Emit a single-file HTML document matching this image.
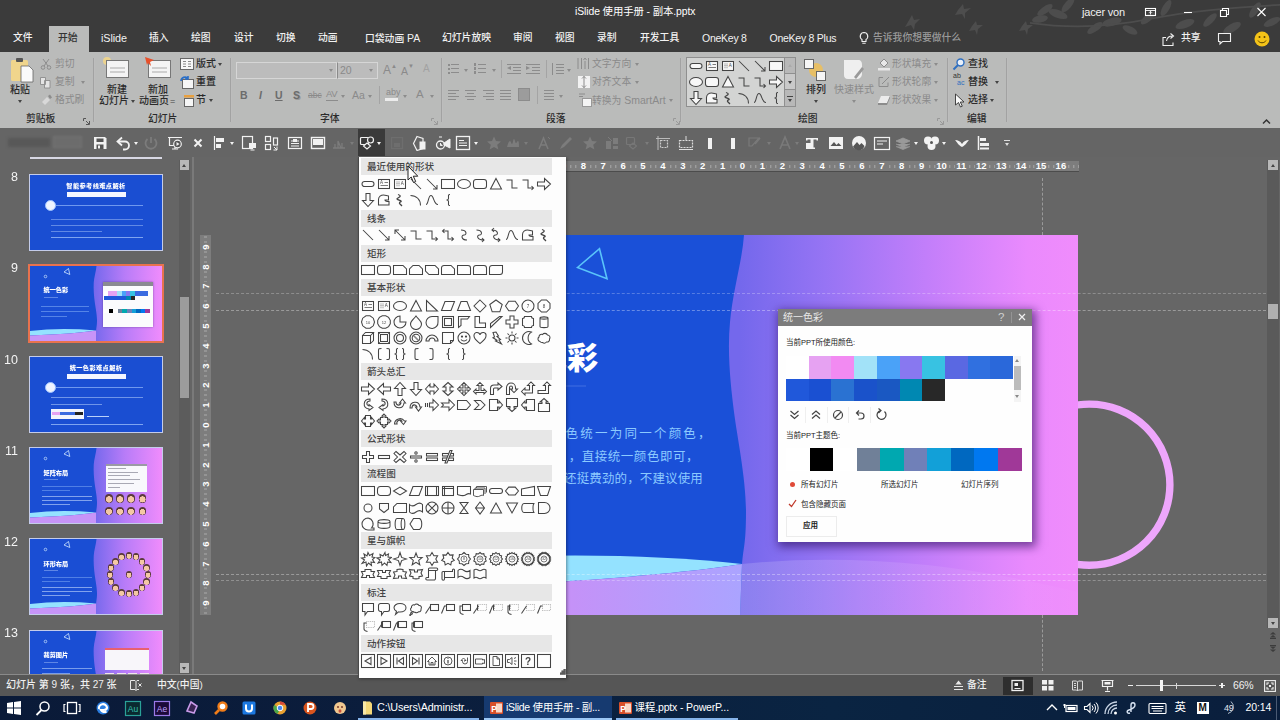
<!DOCTYPE html>
<html lang="zh-CN">
<head>
<meta charset="utf-8">
<title>iSlide 使用手册 - 副本.pptx</title>
<style>
*{box-sizing:border-box;margin:0;padding:0}
html,body{width:1280px;height:720px;overflow:hidden}
body{position:relative;background:#656565;font-family:"Liberation Sans","Noto Sans CJK SC",sans-serif;font-size:11px;color:#fff;filter:blur(0.45px)}
.abs{position:absolute}
#title{left:0;top:0;width:1280px;height:27px;background:#383838;overflow:visible}
#tabs{left:0;top:26px;width:1280px;height:26px;background:transparent}
#tabs span{position:absolute;top:5px;font-size:9.8px;line-height:14px;font-weight:500;color:#f2f2f2;white-space:nowrap}
#ribbon{left:0;top:52px;width:1280px;height:76px;background:#babbba}

#ribbon span{position:absolute;font-size:9.8px;line-height:14px;color:#2a2a2a;white-space:nowrap;font-weight:500}
#ribbon span.g{color:#8a8a8a;font-weight:400}
#ribbon i{position:absolute;width:0;height:0;border-left:2.5px solid transparent;border-right:2.5px solid transparent;border-top:3px solid #444}
#ribbon i.g{border-top-color:#8c8c8c}
#ribbon b.sep{position:absolute;top:6px;width:1px;height:64px;background:#a2a2a2;border-right:1px solid #bdbdbd;box-sizing:content-box}
#ribbon svg{position:absolute}
#qat{left:0;top:128px;width:1280px;height:29px;background:#656565}

#shapes{z-index:10;left:358px;top:157px;width:208px;height:521px;background:#fdfdfd;border-left:1px solid #4a4a4a;box-shadow:1px 1px 3px rgba(0,0,0,.4)}
#shapes .hd{position:absolute;left:2px;width:191px;height:17px;background:#e7e7e7;color:#444;font-size:9.600px;line-height:17px;padding-left:6px;font-weight:500}
#shapes svg{position:absolute;fill:none;stroke:#444;stroke-width:1.050}

#main{left:194px;top:157px;width:1086px;height:519px;overflow:hidden}
.hr{position:absolute;height:0;border-top:1px dashed rgba(255,255,255,.34)}
.vr{position:absolute;width:0;border-left:1px dashed rgba(255,255,255,.34)}
#hruler{left:404px;top:161px;width:675px;height:11px;background:#7d7d7d;border-bottom:1px solid #4c4c4c;overflow:hidden}
#hruler span{position:absolute;top:-1px;width:20px;text-align:center;font-size:9.500px;line-height:12px;color:#fff;font-weight:bold}
#vruler{left:200px;top:235px;width:11px;height:380px;background:#7d7d7d;overflow:hidden}
#vruler span{position:absolute;left:-4.500px;width:20px;height:12px;text-align:center;font-size:9.500px;line-height:12px;color:#fff;font-weight:bold;transform:rotate(-90deg)}
#dlg{left:778px;top:308.500px;width:254px;height:233.500px;background:#fefefe;box-shadow:2px 3px 9px 2px rgba(40,10,90,.6);color:#222}
#dlg span{position:absolute;white-space:nowrap;font-size:7.500px;line-height:10px;color:#222}

#left{left:0;top:157px;width:192px;height:519px;overflow:hidden;background:#656565}
#left .num{position:absolute;font-size:12.500px;line-height:14px;color:#f4f4f4;text-align:right;width:18px;left:0}
.th{position:absolute;left:30px;width:132px;height:75px;overflow:hidden;outline:1px solid #c4ccea;background:#1a4ed2}
.th span{position:absolute;white-space:nowrap;color:#fff;font-weight:900;font-size:6.200px;line-height:8px}
.th .l{position:absolute;height:1px;background:#7ea8f0}
.thb{background:linear-gradient(90deg,#7468ec 48%,#b87cf8 72%,#f08cfc 100%)}
#status{left:0;top:674px;width:1280px;height:22px;background:#565656;border-top:1.500px solid #8a8a8a}

#status span{position:absolute;top:2px;font-size:9.800px;line-height:14px;color:#f0f0f0;white-space:nowrap;font-weight:500}
#taskbar span{position:absolute;top:6px;font-size:10.500px;line-height:14px;color:#fff;white-space:nowrap}
#taskbar svg,#status svg{position:absolute}
#taskbar{left:0;top:696px;width:1280px;height:24px;background:#0a1f3c;overflow:hidden}
</style>
</head>
<body>
<div class="abs" style="left:0;top:0;width:1280px;height:52px;background:#3b3b3b"></div>
<div id="title" class="abs" style="background:transparent">
<svg class="abs" style="left:880px;top:0" width="400" height="52" viewBox="0 0 400 52">
<g fill="#4d4d4d">
<path d="M28 22l4-7 2 5 6-1-5 5-1 6-3-5-6 2z"/>
<path d="M78 10l5-6 1 5 7-1-6 5 0 6-3-5-7 1z"/>
<path d="M92 26l4-5 1 4 6 0-5 4-1 6-2-5-6 1z"/>
<path d="M142 26l4-5 1 4 6 0-5 4-1 6-2-5-6 1z"/>
<ellipse cx="165" cy="10" rx="9" ry="3.500" transform="rotate(-35 165 10)"/>
<ellipse cx="178" cy="14" rx="10" ry="4" transform="rotate(20 178 14)"/>
<ellipse cx="160" cy="19" rx="8" ry="3.500" transform="rotate(-10 160 19)"/>
<ellipse cx="188" cy="5" rx="9" ry="3.500" transform="rotate(-50 188 5)"/>
<ellipse cx="215" cy="28" rx="9" ry="3.500" transform="rotate(-35 215 28)"/>
<ellipse cx="232" cy="22" rx="10" ry="4" transform="rotate(-15 232 22)"/>
<ellipse cx="250" cy="30" rx="8" ry="3.500" transform="rotate(25 250 30)"/>
<ellipse cx="268" cy="18" rx="9" ry="3.500" transform="rotate(-40 268 18)"/>
<ellipse cx="286" cy="8" rx="9" ry="3.500" transform="rotate(-60 286 8)"/>
<ellipse cx="305" cy="24" rx="10" ry="4" transform="rotate(-20 305 24)"/>
<ellipse cx="330" cy="20" rx="9" ry="3.500" transform="rotate(-45 330 20)"/>
<ellipse cx="352" cy="28" rx="10" ry="4" transform="rotate(-30 352 28)"/>
<ellipse cx="375" cy="10" rx="9" ry="3.500" transform="rotate(-55 375 10)"/>
<ellipse cx="392" cy="22" rx="9" ry="3.500" transform="rotate(-25 392 22)"/>
<path d="M150 22c40 6 80 4 120-4s90-12 130-14v1.800c-40 2-90 6-130 14s-80 10-120 4z"/>
</g></svg>
<span class="abs" style="left:575px;top:5px;font-size:10.400px;line-height:14px;color:#fff;white-space:nowrap;letter-spacing:-.1px">iSlide 使用手册 - 副本.pptx</span>
<span class="abs" style="left:1082px;top:5px;font-size:11px;line-height:14px;color:#f0f0f0;white-space:nowrap;letter-spacing:-.2px">jacer von</span>
<svg class="abs" style="left:1140px;top:4px" width="136" height="18" viewBox="0 0 136 18" fill="none" stroke="#fff" stroke-width="1.1">
<rect x="5.5" y="4.5" width="10" height="7"/><path d="M5.5 6.5h10M10.5 10.5v-3M9 8.8l1.5-1.5 1.5 1.5" stroke-width=".9"/>
<path d="M44 8.5h8"/>
<path d="M80.500 6.500h6v6h-6zM82.500 6.500v-2h6v6h-2"/>
<path d="M117.500 4l8 8M125.500 4l-8 8"/>
</svg>
</div>
<div id="tabs" class="abs">
<div class="abs" style="left:49px;top:0;width:40px;height:26px;background:#babbba"></div>
<span style="left:13px">文件</span>
<span style="left:58px;color:#333">开始</span>
<span style="left:101px;font-size:10.800px;letter-spacing:-.1px">iSlide</span>
<span style="left:149px">插入</span>
<span style="left:191px">绘图</span>
<span style="left:234px">设计</span>
<span style="left:276px">切换</span>
<span style="left:318px">动画</span>
<span style="left:365px">口袋动画 <span style="position:static;font-size:10.500px">PA</span></span>
<span style="left:442px">幻灯片放映</span>
<span style="left:513px">审阅</span>
<span style="left:555px">视图</span>
<span style="left:597px">录制</span>
<span style="left:640px">开发工具</span>
<span style="left:702px;font-size:10.500px;letter-spacing:-.25px">OneKey 8</span>
<span style="left:769.500px;font-size:10.500px;letter-spacing:-.25px">OneKey 8 Plus</span>
<svg class="abs" style="left:857px;top:5px" width="14" height="16" viewBox="0 0 14 16" fill="none" stroke="#f0f0f0" stroke-width="1.1"><path d="M7 1.500a3.800 3.800 0 0 0-2 7v2h4v-2a3.800 3.800 0 0 0-2-7zM5.300 12.300h3.400"/></svg>
<span style="left:873px;color:#9a9a9a">告诉我你想要做什么</span>
<svg class="abs" style="left:1160px;top:4px" width="20" height="18" viewBox="0 0 20 18" fill="none" stroke="#f0f0f0" stroke-width="1.1"><path d="M6 7.500h-3v8h10v-3M6.500 11c.5-3 3-5 6-5M10.500 3.500l3 2.500-3 2.500"/></svg>
<span style="left:1181px">共享</span>
<svg class="abs" style="left:1216px;top:4px" width="18" height="18" viewBox="0 0 18 18" fill="none" stroke="#f0f0f0" stroke-width="1.1"><path d="M2.500 3.500h12v8h-8l-2.500 2.500v-2.500h-1.500z"/></svg>
<svg class="abs" style="left:1253px;top:4px" width="18" height="18" viewBox="0 0 18 18"><circle cx="9" cy="9" r="7.500" fill="#f4c318"/><circle cx="6.500" cy="7" r="1" fill="#5a4300"/><circle cx="11.500" cy="7" r="1" fill="#5a4300"/><path d="M5 10.500c1.500 3 6.500 3 8 0" fill="none" stroke="#5a4300" stroke-width="1"/></svg>
</div>
<div id="ribbon" class="abs">
<!-- clipboard -->
<svg style="left:10px;top:5px" width="25" height="27" viewBox="0 0 25 27"><rect x="1" y="3" width="17" height="21" rx="1.500" fill="#f0d58c"/><rect x="6" y="1" width="7" height="4" rx="1" fill="#555"/><path d="M11 9h8l4 4v12h-12z" fill="#fafafa" stroke="#666" stroke-width=".8"/></svg>
<span style="left:10px;top:31px;font-size:10px">粘贴</span><i style="left:18px;top:48px"></i>
<svg style="left:40px;top:6px" width="12" height="12" viewBox="0 0 12 12" fill="none" stroke="#8c8c8c" stroke-width="1"><path d="M3 1l5 7M9 1l-5 7"/><circle cx="3" cy="9.500" r="1.800"/><circle cx="9" cy="9.500" r="1.800"/></svg>
<span class="g" style="left:55px;top:5px">剪切</span>
<svg style="left:39px;top:24px" width="13" height="13" viewBox="0 0 13 13" fill="#e4e4e4" stroke="#8c8c8c" stroke-width=".9"><path d="M1.500 1.500h5v7h-5zM5.500 4.500h5.500v7.500h-5.500z"/></svg>
<span class="g" style="left:55px;top:23px">复制</span><i class="g" style="left:81px;top:29px"></i>
<svg style="left:41px;top:42px" width="12" height="12" viewBox="0 0 12 12"><path d="M1 8l5-5 3 3-5 5z" fill="#d8d8d8"/><path d="M7 2l2-1.500 2 3-2 1.500z" fill="#8c8c8c"/></svg>
<span class="g" style="left:55px;top:41px">格式刷</span>
<span style="left:26px;top:60px">剪贴板</span>
<svg style="left:83px;top:66px" width="7" height="7" viewBox="0 0 7 7" fill="none" stroke="#555" stroke-width="1"><path d="M.5 3v-2.500h2.500M6.500 3v3.500h-3.500M3 3l3 3"/></svg>
<b class="sep" style="left:93px"></b>
<!-- slides -->
<svg style="left:102px;top:4px" width="28" height="24" viewBox="0 0 28 24"><circle cx="5" cy="5" r="4" fill="#f2d68a" opacity=".9"/><rect x="4.500" y="4.500" width="22" height="17" fill="#f4f4f4" stroke="#777" stroke-width="1"/><path d="M8 12h15M8 16h15" stroke="#aaa" stroke-width="1"/></svg>
<span style="left:107px;top:31px;font-size:10px">新建</span>
<span style="left:99px;top:42px;font-size:10px">幻灯片</span><i style="left:131px;top:48px"></i>
<svg style="left:144px;top:4px" width="28" height="24" viewBox="0 0 28 24"><rect x="4.500" y="4.500" width="22" height="17" fill="#f4f4f4" stroke="#777" stroke-width="1"/><path d="M8 12h15M8 16h15" stroke="#aaa" stroke-width="1"/><path d="M1 1l9 3-4 2 1 4-3-3-1 2z" fill="#e8502a"/></svg>
<span style="left:148px;top:31px;font-size:10px">新加</span>
<span style="left:139px;top:42px;font-size:10px">动画页</span><span style="left:170px;top:42px;font-size:9px;color:#444">=</span>
<svg style="left:180px;top:6px" width="14" height="12" viewBox="0 0 14 12"><rect x=".5" y=".5" width="13" height="11" fill="#f6f6f6" stroke="#666"/><path d="M3 3.500h3M3 6h3M3 8.500h3M8 3.500h3M8 6h3M8 8.500h3" stroke="#888" stroke-width="1"/></svg>
<span style="left:196px;top:5px;font-size:10px">版式</span><i style="left:218px;top:11px"></i>
<svg style="left:180px;top:24px" width="14" height="13" viewBox="0 0 14 13"><rect x="2.500" y="3.500" width="11" height="9" fill="#f6f6f6" stroke="#666"/><path d="M1 5a4 4 0 0 1 7-2.500M8 0v3h-3" fill="none" stroke="#2a6fc9" stroke-width="1.600"/></svg>
<span style="left:196px;top:23px;font-size:10px">重置</span>
<svg style="left:184px;top:43px" width="10" height="12" viewBox="0 0 10 12"><rect x=".5" y="3.500" width="9" height="8" fill="#f6f6f6" stroke="#666"/><rect x="0" y="0" width="10" height="2.500" fill="#e8a040"/></svg>
<span style="left:196px;top:41px;font-size:10px">节</span><i style="left:209px;top:47px"></i>
<span style="left:148px;top:60px">幻灯片</span>
<b class="sep" style="left:230px"></b>
<!-- font -->
<div class="abs" style="left:236px;top:10px;width:101px;height:17px;border:1px solid #d6d6d6;background:#bcbcbc"></div>
<i class="g" style="left:329px;top:17px"></i>
<div class="abs" style="left:337px;top:10px;width:41px;height:17px;border:1px solid #d6d6d6;border-left-color:#8a8a8a;background:#bcbcbc"></div>
<span class="g" style="left:340px;top:11px;font-size:10.500px">20</span><i class="g" style="left:369px;top:17px"></i>
<span class="g" style="left:383px;top:11px;font-size:12px">A</span><span class="g" style="left:391px;top:7px;font-size:6px">▲</span>
<span class="g" style="left:401px;top:12px;font-size:10.500px">A</span><span class="g" style="left:408px;top:7px;font-size:6px">▼</span>
<span class="g" style="left:423px;top:10px;font-size:10px;color:#a2a2a2">A</span>
<span class="g" style="left:240px;top:36px;font-weight:bold;font-size:10.500px;color:#6c6c6c">B</span>
<span class="g" style="left:259px;top:36px;font-style:italic;font-weight:bold;font-size:10.500px;color:#6c6c6c">I</span>
<span class="g" style="left:275px;top:36px;text-decoration:underline;font-weight:bold;font-size:10.500px;color:#6c6c6c">U</span>
<span class="g" style="left:293px;top:36px;font-size:10.500px;font-weight:bold;color:#6c6c6c;text-shadow:1px 1px 0 #9a9a9a">S</span>
<span class="g" style="left:308px;top:36px;text-decoration:line-through;font-size:8.500px">abc</span>
<span class="g" style="left:326px;top:35px;font-size:9.500px;letter-spacing:-.5px">AV</span><div class="abs" style="left:326px;top:48px;width:12px;height:1px;background:#8c8c8c"></div><i class="g" style="left:341px;top:43px"></i>
<span class="g" style="left:352px;top:36px;font-size:10.500px">Aa</span><i class="g" style="left:368px;top:43px"></i>
<div class="abs" style="left:379px;top:34px;width:1px;height:18px;background:#a4a4a4"></div>
<span class="g" style="left:386px;top:33px;font-size:9px">aby</span><div class="abs" style="left:385px;top:46px;width:13px;height:3px;background:#ececec"></div><i class="g" style="left:403px;top:43px"></i>
<span class="g" style="left:416px;top:35px;font-size:11.500px">A</span><i class="g" style="left:430px;top:43px"></i>
<span style="left:320px;top:60px">字体</span>
<svg style="left:431px;top:66px" width="7" height="7" viewBox="0 0 7 7" fill="none" stroke="#999" stroke-width="1"><path d="M.5 3v-2.500h2.500M6.500 3v3.500h-3.500M3 3l3 3"/></svg>
<b class="sep" style="left:441px"></b>
<!-- paragraph -->
<div class="abs" style="left:451px;top:12px;width:8px;height:1px;background:#8c8c8c"></div><div class="abs" style="left:451px;top:16px;width:8px;height:1px;background:#8c8c8c"></div><div class="abs" style="left:451px;top:20px;width:8px;height:1px;background:#8c8c8c"></div><div class="abs" style="left:448px;top:12px;width:1.500px;height:1.500px;background:#8c8c8c"></div><div class="abs" style="left:448px;top:16px;width:1.500px;height:1.500px;background:#8c8c8c"></div><div class="abs" style="left:448px;top:20px;width:1.500px;height:1.500px;background:#8c8c8c"></div><i class="g" style="left:464px;top:17px"></i><div class="abs" style="left:478px;top:12px;width:8px;height:1px;background:#8c8c8c"></div><div class="abs" style="left:478px;top:16px;width:8px;height:1px;background:#8c8c8c"></div><div class="abs" style="left:478px;top:20px;width:8px;height:1px;background:#8c8c8c"></div><div class="abs" style="left:474px;top:11px;width:1.500px;height:2.500px;background:#8c8c8c"></div><div class="abs" style="left:474px;top:15px;width:1.500px;height:2.500px;background:#8c8c8c"></div><div class="abs" style="left:474px;top:19px;width:1.500px;height:2.500px;background:#8c8c8c"></div><i class="g" style="left:492px;top:17px"></i><div class="abs" style="left:501px;top:8px;width:1px;height:18px;background:#a4a4a4"></div><div class="abs" style="left:507px;top:12px;width:14px;height:1px;background:#8c8c8c"></div><div class="abs" style="left:513px;top:15px;width:8px;height:1px;background:#8c8c8c"></div><div class="abs" style="left:513px;top:18px;width:8px;height:1px;background:#8c8c8c"></div><div class="abs" style="left:507px;top:21px;width:14px;height:1px;background:#8c8c8c"></div><div class="abs" style="left:507px;top:14px;border-right:4px solid #8c8c8c;border-top:2.500px solid transparent;border-bottom:2.500px solid transparent"></div><div class="abs" style="left:526px;top:12px;width:14px;height:1px;background:#8c8c8c"></div><div class="abs" style="left:532px;top:15px;width:8px;height:1px;background:#8c8c8c"></div><div class="abs" style="left:532px;top:18px;width:8px;height:1px;background:#8c8c8c"></div><div class="abs" style="left:526px;top:21px;width:14px;height:1px;background:#8c8c8c"></div><div class="abs" style="left:526px;top:14px;border-left:4px solid #8c8c8c;border-top:2.500px solid transparent;border-bottom:2.500px solid transparent"></div><div class="abs" style="left:546px;top:8px;width:1px;height:18px;background:#a4a4a4"></div><div class="abs" style="left:556px;top:12px;width:8px;height:1px;background:#8c8c8c"></div><div class="abs" style="left:556px;top:15px;width:8px;height:1px;background:#8c8c8c"></div><div class="abs" style="left:556px;top:18px;width:8px;height:1px;background:#8c8c8c"></div><div class="abs" style="left:556px;top:21px;width:8px;height:1px;background:#8c8c8c"></div><div class="abs" style="left:552px;top:11px;width:1px;height:12px;background:#8c8c8c"></div><i class="g" style="left:567px;top:17px"></i><div class="abs" style="left:448px;top:38px;width:11px;height:1px;background:#8c8c8c"></div><div class="abs" style="left:448px;top:41px;width:8px;height:1px;background:#8c8c8c"></div><div class="abs" style="left:448px;top:44px;width:11px;height:1px;background:#8c8c8c"></div><div class="abs" style="left:448px;top:47px;width:8px;height:1px;background:#8c8c8c"></div><div class="abs" style="left:465px;top:38px;width:11px;height:1px;background:#8c8c8c"></div><div class="abs" style="left:467px;top:41px;width:7px;height:1px;background:#8c8c8c"></div><div class="abs" style="left:465px;top:44px;width:11px;height:1px;background:#8c8c8c"></div><div class="abs" style="left:467px;top:47px;width:7px;height:1px;background:#8c8c8c"></div><div class="abs" style="left:483px;top:38px;width:11px;height:1px;background:#8c8c8c"></div><div class="abs" style="left:486px;top:41px;width:8px;height:1px;background:#8c8c8c"></div><div class="abs" style="left:483px;top:44px;width:11px;height:1px;background:#8c8c8c"></div><div class="abs" style="left:486px;top:47px;width:8px;height:1px;background:#8c8c8c"></div><div class="abs" style="left:500px;top:38px;width:11px;height:1px;background:#8c8c8c"></div><div class="abs" style="left:500px;top:41px;width:11px;height:1px;background:#8c8c8c"></div><div class="abs" style="left:500px;top:44px;width:11px;height:1px;background:#8c8c8c"></div><div class="abs" style="left:500px;top:47px;width:11px;height:1px;background:#8c8c8c"></div><div class="abs" style="left:518px;top:36px;width:12px;height:13px;background:#9c9c9c;border:1px solid #8c8c8c"></div><div class="abs" style="left:537px;top:34px;width:1px;height:18px;background:#a4a4a4"></div><div class="abs" style="left:544px;top:38px;width:10px;height:1px;background:#8c8c8c"></div><div class="abs" style="left:544px;top:41px;width:10px;height:1px;background:#8c8c8c"></div><div class="abs" style="left:544px;top:44px;width:10px;height:1px;background:#8c8c8c"></div><div class="abs" style="left:544px;top:47px;width:10px;height:1px;background:#8c8c8c"></div><i class="g" style="left:559px;top:43px"></i>
<svg style="left:576px;top:5px" width="14" height="13" viewBox="0 0 14 13" fill="none" stroke="#8c8c8c" stroke-width="1"><path d="M2 1v11M5.500 1v11M9 4v8M12.500 1v11M7.500 3l1.500-2 1.500 2"/></svg>
<span class="g" style="left:592px;top:5px">文字方向</span><i class="g" style="left:635px;top:11px"></i>
<svg style="left:577px;top:23px" width="14" height="14" viewBox="0 0 14 14"><rect x="1" y="1" width="12" height="12" fill="#f2f2f2"/><path d="M7 1v12M5 3.500l2-2 2 2M5 10.500l2 2 2-2" fill="none" stroke="#8c8c8c" stroke-width="1"/></svg>
<span class="g" style="left:592px;top:23px">对齐文本</span><i class="g" style="left:635px;top:29px"></i>
<svg style="left:578px;top:41px" width="14" height="14" viewBox="0 0 14 14"><path d="M1 1h6M1 3.500h4" stroke="#8c8c8c" fill="none"/><rect x="4.500" y="5.500" width="9" height="8" fill="#f4f4f4" stroke="#999"/></svg>
<span class="g" style="left:592px;top:41px">转换为 <span style="position:static;font-size:10.500px;color:inherit">SmartArt</span></span><i class="g" style="left:669px;top:47px"></i>
<span style="left:546px;top:60px">段落</span>
<svg style="left:673px;top:66px" width="7" height="7" viewBox="0 0 7 7" fill="none" stroke="#999" stroke-width="1"><path d="M.5 3v-2.500h2.500M6.500 3v3.500h-3.500M3 3l3 3"/></svg>
<b class="sep" style="left:680px"></b>
<!-- drawing -->
<div class="abs" style="left:686px;top:5px;width:110px;height:50px;background:#d3d4d3;border:1px solid #8f8f8f"></div><div class="abs" style="left:784px;top:5px;width:12px;height:50px;border:1px solid #8f8f8f;background:#b8b8b8"></div><div class="abs" style="left:784px;top:21px;width:12px;height:17px;border:1px solid #8f8f8f;background:#c9c9c9"></div><i class="g" style="left:787.500px;top:12px;border-top:none;border-bottom:3px solid #aaa"></i><i style="left:787.500px;top:29px"></i><i style="left:787.500px;top:47px"></i><div class="abs" style="left:787px;top:44px;width:6px;height:1px;background:#444"></div><svg style="left:688px;top:6px;fill:#f8f8f8;stroke:#444;stroke-width:1.050" width="16" height="16" viewBox="0 0 16 16"><rect x="2" y="5.500" width="12" height="5" rx="2.500"/></svg><svg style="left:704px;top:6px;fill:#f8f8f8;stroke:#444;stroke-width:1.050" width="16" height="16" viewBox="0 0 16 16"><rect x="2.500" y="3.500" width="11" height="9"/><path d="M8.500 6.500h3.500M4.500 9.500h7.500" stroke-width=".7"/><text x="4" y="8" font-size="4.500" stroke="none" fill="#444" font-family="Liberation Sans,sans-serif">A</text></svg><svg style="left:720px;top:6px;fill:#f8f8f8;stroke:#444;stroke-width:1.050" width="16" height="16" viewBox="0 0 16 16"><rect x="2.500" y="3.500" width="11" height="9"/><path d="M5 5.500v5M7 5.500v5" stroke-width=".7" stroke-dasharray="1 .6"/><text x="8.800" y="9" font-size="4.500" stroke="none" fill="#444" font-family="Liberation Sans,sans-serif">A</text></svg><svg style="left:736px;top:6px;fill:none;stroke:#444;stroke-width:1.050" width="16" height="16" viewBox="0 0 16 16"><path d="M3 3l10 10"/></svg><svg style="left:752px;top:6px;fill:none;stroke:#444;stroke-width:1.050" width="16" height="16" viewBox="0 0 16 16"><path d="M3 3l10 10M13 9v4h-4"/></svg><svg style="left:768px;top:6px;fill:#f8f8f8;stroke:#444;stroke-width:1.050" width="16" height="16" viewBox="0 0 16 16"><rect x="1.500" y="3.500" width="13" height="9"/></svg><svg style="left:688px;top:22px;fill:#f8f8f8;stroke:#444;stroke-width:1.050" width="16" height="16" viewBox="0 0 16 16"><ellipse cx="8" cy="8" rx="6.500" ry="4.500"/></svg><svg style="left:704px;top:22px;fill:#f8f8f8;stroke:#444;stroke-width:1.050" width="16" height="16" viewBox="0 0 16 16"><rect x="1.500" y="3.500" width="13" height="9" rx="2.500"/></svg><svg style="left:720px;top:22px;fill:#f8f8f8;stroke:#444;stroke-width:1.050" width="16" height="16" viewBox="0 0 16 16"><path d="M8 2.500l5.500 10.500h-11z"/></svg><svg style="left:736px;top:22px;fill:none;stroke:#444;stroke-width:1.050" width="16" height="16" viewBox="0 0 16 16"><path d="M2.500 4h5.500v8h5.500"/></svg><svg style="left:752px;top:22px;fill:none;stroke:#444;stroke-width:1.050" width="16" height="16" viewBox="0 0 16 16"><path d="M2.500 4h5.500v8h5.500M11.500 10l2 2-2 2"/></svg><svg style="left:768px;top:22px;fill:#f8f8f8;stroke:#444;stroke-width:1.050" width="16" height="16" viewBox="0 0 16 16"><path d="M1.500 6h7v-3.500l6 5.500-6 5.500v-3.500h-7z"/></svg><svg style="left:688px;top:38px;fill:#f8f8f8;stroke:#444;stroke-width:1.050" width="16" height="16" viewBox="0 0 16 16"><path d="M6 1.500v7h-3.500l5.500 6 5.500-6h-3.500v-7z"/></svg><svg style="left:704px;top:38px;fill:#f8f8f8;stroke:#444;stroke-width:1.050" width="16" height="16" viewBox="0 0 16 16"><path d="M2.500 13v-5.500c0-3 2.500-4.500 5-4.500s3 1 5 1v4h-3.500c0 1.500 1.500 1.500 4 1.500v3.500z"/></svg><svg style="left:720px;top:38px;fill:none;stroke:#444;stroke-width:1.050" width="16" height="16" viewBox="0 0 16 16"><path d="M6 2.500c3 1 3 2 0 3.500s2 2 3 3-3 1-1 3 2 1 1 2" stroke-width="1.300"/></svg><svg style="left:736px;top:38px;fill:none;stroke:#444;stroke-width:1.050" width="16" height="16" viewBox="0 0 16 16"><path d="M2.500 3.500c6 0 10 4 10 10"/></svg><svg style="left:752px;top:38px;fill:none;stroke:#444;stroke-width:1.050" width="16" height="16" viewBox="0 0 16 16"><path d="M2 12.500C4.500 12.500 4 3.500 7 3.500S9.500 12.500 14 12.500"/></svg><svg style="left:768px;top:38px;fill:none;stroke:#444;stroke-width:1.050" width="16" height="16" viewBox="0 0 16 16"><path d="M10 2.500C8 2.500 8.500 3.500 8.500 5V6.500C8.500 7.500 8 8 6.500 8C8 8 8.500 8.500 8.500 9.500V11C8.500 12.500 8 13.500 10 13.500"/></svg>
<svg style="left:802px;top:5px" width="26" height="26" viewBox="0 0 26 26"><circle cx="14" cy="13" r="7" fill="#f5c04a" opacity=".75"/><rect x="2.500" y="2.500" width="9" height="9" fill="#f6f6f6" stroke="#666"/><rect x="14.500" y="14.500" width="9" height="9" fill="#f6f6f6" stroke="#666"/></svg>
<span style="left:806px;top:31px;font-size:10px">排列</span><i style="left:814px;top:48px"></i>
<svg style="left:840px;top:5px" width="27" height="27" viewBox="0 0 27 27"><path d="M4 3h14c3 0 4 2 4 5v8c0 4-2 6-6 6h-8c-3 0-4-2-4-4z" fill="#efefef"/><path d="M14 20l8-10 2 2-8 10z" fill="#9a9a9a"/></svg>
<span class="g" style="left:834px;top:31px;font-size:10px">快速样式</span><i class="g" style="left:852px;top:48px"></i>
<svg style="left:877px;top:5px" width="14" height="14" viewBox="0 0 14 14"><path d="M3 6l4-4 4 4-4 4z" fill="#e8e8e8" stroke="#8c8c8c"/><rect x="1" y="11" width="12" height="2.500" fill="#e8e8e8"/></svg>
<span class="g" style="left:892px;top:5px">形状填充</span><i class="g" style="left:934px;top:11px"></i>
<svg style="left:877px;top:23px" width="14" height="14" viewBox="0 0 14 14" fill="none" stroke="#8c8c8c"><path d="M6 2.500h-4v9h9v-4M5 9l7-7"/></svg>
<span class="g" style="left:892px;top:23px">形状轮廓</span><i class="g" style="left:934px;top:29px"></i>
<svg style="left:877px;top:41px" width="14" height="14" viewBox="0 0 14 14"><path d="M4 3h9l-3 7h-9z" fill="#ececec"/><path d="M1 10h9l3-7v2l-3 7h-9z" fill="#8c8c8c"/></svg>
<span class="g" style="left:892px;top:41px">形状效果</span><i class="g" style="left:934px;top:47px"></i>
<span style="left:798px;top:60px">绘图</span>
<svg style="left:937px;top:66px" width="7" height="7" viewBox="0 0 7 7" fill="none" stroke="#999" stroke-width="1"><path d="M.5 3v-2.500h2.500M6.500 3v3.500h-3.500M3 3l3 3"/></svg>
<b class="sep" style="left:947px"></b>
<!-- editing -->
<svg style="left:952px;top:5px" width="14" height="14" viewBox="0 0 14 14"><circle cx="8.500" cy="5.500" r="3.500" fill="#e8f0fa" stroke="#2f6fc0" stroke-width="1.400"/><path d="M6 8l-4.500 4.500" stroke="#2f6fc0" stroke-width="2"/></svg>
<span style="left:968px;top:5px;font-size:10px">查找</span>
<span style="left:953px;top:20px;font-size:7px;line-height:8px;color:#333">ab</span><span style="left:957px;top:27px;font-size:7px;line-height:8px;color:#2f6fc0">ac</span>
<span style="left:968px;top:23px;font-size:10px">替换</span><i style="left:995px;top:29px"></i>
<svg style="left:954px;top:41px" width="11" height="15" viewBox="0 0 11 15"><path d="M1.500 1v11l3-2.500 2 4.500 1.800-.8-2-4.200h3.700z" fill="#fafafa" stroke="#333" stroke-width=".9"/></svg>
<span style="left:968px;top:41px;font-size:10px">选择</span><i style="left:990px;top:47px"></i>
<span style="left:967px;top:60px">编辑</span>
<b class="sep" style="left:1006px"></b>
<svg style="left:1262px;top:66px" width="9" height="7" viewBox="0 0 9 7" fill="none" stroke="#333" stroke-width="1.500"><path d="M1 5.500l3.500-3.500 3.500 3.500"/></svg>

</div>
<div id="qat" class="abs">
<div class="abs" style="left:8px;top:10px;width:42px;height:9px;background:#585858;filter:blur(1.500px)"></div><div class="abs" style="left:53px;top:8px;width:29px;height:12px;background:#6c6c6c;border:1px solid #747474;filter:blur(.8px)"></div><div class="abs" style="left:358px;top:1px;width:27px;height:27px;background:#3a3a3a"></div><svg class="abs" style="left:92px;top:7px" width="16" height="16" viewBox="0 0 16 16"><path d="M2 2h11l1.500 1.500v10.500h-12.500z" fill="#f2f2f2"/><rect x="4.500" y="3.500" width="7" height="3.500" fill="#555"/><rect x="4.500" y="9.500" width="7" height="4.500" fill="#555"/><rect x="6" y="10.500" width="2" height="3" fill="#f2f2f2"/></svg>
<svg class="abs" style="left:116px;top:7px" width="16" height="16" viewBox="0 0 16 16"><path d="M2 6.500h7a4 4 0 0 1 0 8h-2" fill="none" stroke="#f2f2f2" stroke-width="1.800"/><path d="M6 2.500l-4.500 4 4.500 4" fill="none" stroke="#f2f2f2" stroke-width="1.800"/></svg>
<svg class="abs" style="left:143px;top:7px" width="16" height="16" viewBox="0 0 16 16"><path d="M11.500 4a5.500 5.500 0 1 1-7 0" fill="none" stroke="#7c7c7c" stroke-width="1.800"/><path d="M8 2v6" stroke="#7c7c7c" stroke-width="1.800"/></svg>
<svg class="abs" style="left:167px;top:7px" width="16" height="16" viewBox="0 0 16 16"><path d="M1 2.500h14M2.500 2.500v8h5M8 10.500v3M5 14h6" fill="none" stroke="#f2f2f2" stroke-width="1.200"/><circle cx="10.500" cy="9" r="3.800" fill="#555" stroke="#f2f2f2" stroke-width="1.200"/><path d="M9.500 7l3 2-3 2z" fill="#f2f2f2"/></svg>
<svg class="abs" style="left:190px;top:7px" width="16" height="16" viewBox="0 0 16 16"><path d="M4.500 4.500l7 7M11.500 4.500l-7 7" stroke="#f2f2f2" stroke-width="2"/></svg>
<svg class="abs" style="left:211px;top:7px" width="16" height="16" viewBox="0 0 16 16"><path d="M3.500 1v14" stroke="#f2f2f2" stroke-width="1.200"/><rect x="5" y="3" width="8" height="4" fill="#f2f2f2"/><rect x="5" y="9" width="5" height="4" fill="#f2f2f2"/></svg>
<svg class="abs" style="left:241px;top:7px" width="16" height="16" viewBox="0 0 16 16"><rect x="1.500" y="1.500" width="10" height="12" fill="none" stroke="#f2f2f2" stroke-width="1.200"/><rect x="8" y="8" width="7" height="5" fill="#f2f2f2"/><path d="M9.500 15h4" stroke="#f2f2f2"/></svg>
<svg class="abs" style="left:264px;top:7px" width="16" height="16" viewBox="0 0 16 16"><rect x="1.500" y="1.500" width="5" height="5" fill="none" stroke="#f2f2f2" stroke-width="1.200"/><rect x="1.500" y="9.500" width="5" height="5" fill="none" stroke="#f2f2f2" stroke-width="1.200"/><rect x="9.500" y="3" width="4" height="7" fill="none" stroke="#f2f2f2" stroke-width="1.200"/><path d="M10 12l3 3M13 11.500v3.500h-3.500" stroke="#f2f2f2" fill="none"/></svg>
<svg class="abs" style="left:287px;top:7px" width="16" height="16" viewBox="0 0 16 16"><rect x="1.500" y="2.500" width="13" height="11" fill="none" stroke="#f2f2f2" stroke-width="1.200"/><path d="M4 6h8M4 8.500h8M4 11h8" stroke="#f2f2f2" stroke-width="1"/><rect x="6" y="4" width="4" height="3" fill="#f2f2f2"/></svg>
<svg class="abs" style="left:310px;top:7px" width="16" height="16" viewBox="0 0 16 16"><rect x="1.500" y="2.500" width="13" height="11" fill="none" stroke="#f2f2f2" stroke-width="1.400"/><rect x="3" y="4" width="10" height="6" fill="#f2f2f2"/></svg>
<svg class="abs" style="left:331px;top:7px" width="16" height="16" viewBox="0 0 16 16"><path d="M2 13h12M4 13v-4M7 13v-7l3 7M11 13v-5" stroke="#7c7c7c" fill="none" stroke-width="1.300"/></svg>
<svg class="abs" style="left:359px;top:7px" width="16" height="16" viewBox="0 0 16 16"><rect x="1.500" y="2.500" width="8" height="7" rx="1" fill="none" stroke="#f2f2f2" stroke-width="1.200"/><circle cx="11.500" cy="5" r="3" fill="#3a3a3a" stroke="#f2f2f2" stroke-width="1.200"/><path d="M8 8l3.500 3-3.500 3-3.500-3z" fill="#3a3a3a" stroke="#f2f2f2" stroke-width="1.200"/></svg>
<svg class="abs" style="left:389px;top:7px" width="16" height="16" viewBox="0 0 16 16"><rect x="2.500" y="2.500" width="11" height="11" fill="none" stroke="#6e6e6e" stroke-width="1.200"/><rect x="5" y="8" width="6" height="4" fill="#6e6e6e"/></svg>
<svg class="abs" style="left:412px;top:7px" width="16" height="16" viewBox="0 0 16 16"><path d="M5 1.500l6 2v10l-6 2-3.500-7z" fill="none" stroke="#f2f2f2" stroke-width="1.200"/><rect x="7.500" y="6.500" width="6" height="8" fill="#f2f2f2"/></svg>
<svg class="abs" style="left:435px;top:7px" width="16" height="16" viewBox="0 0 16 16"><circle cx="5.500" cy="10" r="4" fill="none" stroke="#f2f2f2" stroke-width="1.300"/><path d="M5.500 8v2.500h2M4 2h3M9 8l6-4v9l-6-3z" fill="#f2f2f2" stroke="#f2f2f2" stroke-width="1"/></svg>
<svg class="abs" style="left:455px;top:7px" width="16" height="16" viewBox="0 0 16 16"><rect x="1.500" y="1.500" width="13" height="13" fill="none" stroke="#f2f2f2" stroke-width="1.300"/><path d="M4 5.500h5M4 8h8M4 10.500h8" stroke="#f2f2f2" stroke-width="1.200"/></svg>
<svg class="abs" style="left:486px;top:7px" width="16" height="16" viewBox="0 0 16 16"><path d="M8 1.500l2 4.500 5 .5-3.800 3.300 1.200 4.800-4.400-2.600-4.400 2.600 1.200-4.800-3.800-3.300 5-.5z" fill="#7c7c7c"/></svg>
<svg class="abs" style="left:505px;top:7px" width="16" height="16" viewBox="0 0 16 16"><path d="M1 13h14M2 12c1-4 2-6 3-6s1 3 2 3 1-5 2-5 1 4 2 4 1-2 2-2 1 3 1 6" fill="#7c7c7c"/></svg>
<svg class="abs" style="left:536px;top:7px" width="16" height="16" viewBox="0 0 16 16"><path d="M3 14l4.500-11 4.500 11M5 10h5" fill="none" stroke="#7c7c7c" stroke-width="1.500"/><path d="M12 2l2 2" stroke="#7c7c7c"/></svg>
<svg class="abs" style="left:558px;top:7px" width="16" height="16" viewBox="0 0 16 16"><path d="M2 14l2-4 8-8 2 2-8 8z" fill="#7c7c7c"/></svg>
<svg class="abs" style="left:582px;top:7px" width="16" height="16" viewBox="0 0 16 16"><path d="M8 1.500l2 4.500 5 .5-3.800 3.300 1.200 4.800-4.400-2.600-4.400 2.600 1.200-4.800-3.800-3.300 5-.5z" fill="#7c7c7c"/></svg>
<svg class="abs" style="left:604px;top:7px" width="16" height="16" viewBox="0 0 16 16"><rect x="2" y="6" width="5" height="8" fill="#7c7c7c"/><rect x="9" y="3" width="5" height="6" fill="#7c7c7c"/><rect x="9" y="11" width="5" height="3" fill="#7c7c7c"/><path d="M4 2l4 4" stroke="#7c7c7c"/></svg>
<svg class="abs" style="left:625px;top:7px" width="16" height="16" viewBox="0 0 16 16"><rect x="1.500" y="2.500" width="8" height="7" rx="1" fill="none" stroke="#777" stroke-width="1.200"/><path d="M8 8l3.500 3-3.500 3-3.500-3z" fill="none" stroke="#777" stroke-width="1.200"/></svg>
<svg class="abs" style="left:655px;top:7px" width="16" height="16" viewBox="0 0 16 16"><path d="M3 1v14M1 3.500h14" stroke="#bbb" stroke-width="1"/><rect x="5.500" y="5.500" width="7" height="7" fill="none" stroke="#ccc" stroke-width="1.200" stroke-dasharray="2 1"/></svg>
<svg class="abs" style="left:678px;top:7px" width="16" height="16" viewBox="0 0 16 16"><rect x="1.500" y="5.500" width="13" height="7" fill="none" stroke="#ddd" stroke-width="1.200" stroke-dasharray="2 1"/><path d="M8 1v4M1 14.500h14" stroke="#ddd"/></svg>
<svg class="abs" style="left:702px;top:7px" width="16" height="16" viewBox="0 0 16 16"><rect x="6" y="3" width="4" height="11" fill="#f2f2f2"/></svg>
<svg class="abs" style="left:725px;top:7px" width="16" height="16" viewBox="0 0 16 16"><rect x="6" y="3" width="4" height="11" fill="#f2f2f2"/></svg>
<svg class="abs" style="left:747px;top:7px" width="16" height="16" viewBox="0 0 16 16"><path d="M2 3h10l-7 8h-3z" fill="none" stroke="#7a7a7a" stroke-width="1.200"/><path d="M8 9l5-6" stroke="#7a7a7a" stroke-width="1.500"/></svg>
<svg class="abs" style="left:777px;top:7px" width="16" height="16" viewBox="0 0 16 16"><path d="M3 14l5-12 5 12M5 10h6" fill="none" stroke="#7a7a7a" stroke-width="1.600"/></svg>
<svg class="abs" style="left:804px;top:7px" width="16" height="16" viewBox="0 0 16 16"><path d="M2 3h12v2.500h-1.500v-1h-3v8h1.500v1.500h-6v-1.500h1.500v-8h-3v1h-1.500z" fill="#f2f2f2"/><rect x="2" y="8" width="5" height="6" fill="#f2f2f2"/></svg>
<svg class="abs" style="left:828px;top:7px" width="16" height="16" viewBox="0 0 16 16"><rect x="1" y="2" width="14" height="12" fill="#f2f2f2"/><path d="M2.500 11l3.500-4 2.500 3 2-2 3 3z" fill="#555"/></svg>
<svg class="abs" style="left:851px;top:7px" width="16" height="16" viewBox="0 0 16 16"><circle cx="8" cy="8" r="7" fill="#f2f2f2"/><path d="M2.500 11l3.500-4 2.500 3 2-2 3 3a6 6 0 0 1-11.500 0z" fill="#555"/></svg>
<svg class="abs" style="left:873px;top:7px" width="18" height="16" viewBox="0 0 18 16"><rect x="1.500" y="2.500" width="15" height="12" fill="none" stroke="#f2f2f2" stroke-width="1.200"/><path d="M4 6h10M4 9h6" stroke="#f2f2f2" stroke-width="1.200"/></svg>
<svg class="abs" style="left:895px;top:7px" width="16" height="16" viewBox="0 0 16 16"><path d="M8 3l7 3-7 3-7-3zM1 9l7 3 7-3M1 11.500l7 3 7-3" fill="#999" stroke="#999" stroke-width=".8"/></svg>
<svg class="abs" style="left:922.5px;top:7px" width="17" height="16" viewBox="0 0 17 16"><circle cx="5" cy="5.500" r="4" fill="#f2f2f2"/><circle cx="12" cy="5.500" r="4" fill="#f2f2f2"/><circle cx="8.500" cy="11" r="4" fill="#f2f2f2"/><circle cx="8.500" cy="7.500" r="1.500" fill="#555"/></svg>
<svg class="abs" style="left:954px;top:7px" width="16" height="16" viewBox="0 0 16 16"><path d="M1 5c3 0 5 1 7 4 2-3 4-4 7-4-2 2-3 5-7 7-4-2-5-5-7-7z" fill="#f2f2f2"/></svg>
<svg class="abs" style="left:976px;top:7px" width="16" height="16" viewBox="0 0 16 16"><path d="M2.500 1v14" stroke="#f2f2f2" stroke-width="1.500"/><rect x="4" y="3" width="6" height="3" fill="#f2f2f2"/><rect x="4" y="8" width="9" height="3" fill="#f2f2f2"/><rect x="4" y="12.500" width="9" height="2" fill="#f2f2f2"/></svg>
<div class="abs" style="left:133.5px;top:14px;border-left:2.500px solid transparent;border-right:2.500px solid transparent;border-top:3px solid #f2f2f2"></div><div class="abs" style="left:229.5px;top:14px;border-left:2.500px solid transparent;border-right:2.500px solid transparent;border-top:3px solid #f2f2f2"></div><div class="abs" style="left:349.5px;top:14px;border-left:2.500px solid transparent;border-right:2.500px solid transparent;border-top:3px solid #7c7c7c"></div><div class="abs" style="left:376.5px;top:14px;border-left:2.500px solid transparent;border-right:2.500px solid transparent;border-top:3px solid #f2f2f2"></div><div class="abs" style="left:473.5px;top:14px;border-left:2.500px solid transparent;border-right:2.500px solid transparent;border-top:3px solid #f2f2f2"></div><div class="abs" style="left:523.5px;top:14px;border-left:2.500px solid transparent;border-right:2.500px solid transparent;border-top:3px solid #7c7c7c"></div><div class="abs" style="left:644.5px;top:14px;border-left:2.500px solid transparent;border-right:2.500px solid transparent;border-top:3px solid #7c7c7c"></div><div class="abs" style="left:766.5px;top:14px;border-left:2.500px solid transparent;border-right:2.500px solid transparent;border-top:3px solid #7c7c7c"></div><div class="abs" style="left:794.5px;top:14px;border-left:2.500px solid transparent;border-right:2.500px solid transparent;border-top:3px solid #7c7c7c"></div><div class="abs" style="left:913.5px;top:14px;border-left:2.500px solid transparent;border-right:2.500px solid transparent;border-top:3px solid #f2f2f2"></div><div class="abs" style="left:941.5px;top:14px;border-left:2.500px solid transparent;border-right:2.500px solid transparent;border-top:3px solid #f2f2f2"></div><div class="abs" style="left:1004px;top:12px;width:6px;height:1px;background:#ddd"></div><div class="abs" style="left:1004.5px;top:15px;border-left:2.500px solid transparent;border-right:2.500px solid transparent;border-top:3px solid #ddd"></div>
</div>
<div id="left" class="abs">
<div class="abs" style="left:30px;top:0;width:132px;height:2px;background:#d8d8e4"></div><div class="num" style="top:13px">8</div><div class="num" style="top:104px">9</div><div class="num" style="top:195.5px">10</div><div class="num" style="top:286.5px">11</div><div class="num" style="top:377.5px">12</div><div class="num" style="top:468.5px">13</div><div class="th" style="top:17.5px"><span style="left:0;width:132px;text-align:center;top:7.500px;letter-spacing:.4px">智能参考线难点解析</span><div class="abs" style="left:37px;top:17.500px;width:59px;height:4.500px;background:#f4f6ff"></div><div class="abs" style="left:14.500px;top:25px;width:11px;height:11px;border-radius:6px;background:#eef4ff;border:1.500px solid #9cc0ff"></div><div class="l" style="left:26px;top:30.500px;width:87px;background:#6f98ee"></div><div class="l" style="left:21px;top:44px;width:92px;background:#a8c4f8;opacity:.5"></div><div class="l" style="left:21px;top:50px;width:92px;background:#a8c4f8;opacity:.5"></div><div class="l" style="left:21px;top:56px;width:50.6px;background:#a8c4f8;opacity:.5"></div><div class="l" style="left:21px;top:62.500px;width:92px;background:#7ea4f0"></div></div><div class="th thb" style="top:108.5px;outline:2.500px solid #e8724e;"><svg class="abs" style="left:0;top:0" width="132" height="75" viewBox="0 0 132 75"><path d="M0 0H66.500C66 6 64 11 63.700 17S64 30 64.600 35 67 48 67 54 66.300 61 66.200 64.500L66 75H0z" fill="#1a4ed4"/><path d="M0 65Q30 61.500 66.200 64.500Q45 67.800 0 69.500z" fill="#94e2ff"/><path d="M0 69.500Q45 67.800 66.200 64.500L66 75H0z" fill="#c794f8"/><path d="M34 6l4.500-3.500 1.300 6z" fill="none" stroke="#cfe6ff" stroke-width=".8"/><circle cx="15.500" cy="10.500" r="1.300" fill="none" stroke="#cfe6ff" stroke-width=".7"/></svg><span style="left:13.500px;top:20.500px">统一色彩</span><div class="l" style="left:14px;top:31px;width:14px;background:#5e86e6"></div><div class="abs" style="left:72.500px;top:16.500px;width:50px;height:45px;background:#fbfbfd;box-shadow:0 0 2px rgba(40,20,90,.5)"></div><div class="abs" style="left:72.500px;top:16.500px;width:50px;height:3.500px;background:#8a8a92"></div><div class="abs" style="left:74px;top:25.500px;width:44px;height:4.500px;background:linear-gradient(90deg,#fff 0 10%,#e6a2f2 10% 30%,#a2e2f8 30% 40%,#4aa2f8 40% 50%,#8878f0 50% 60%,#38c2e2 60% 70%,#3a6ae0 70%)"></div><div class="abs" style="left:74px;top:30px;width:31px;height:4.500px;background:linear-gradient(90deg,#2058da 0 70%,#0088b2 70% 86%,#282828 86%)"></div><div class="abs" style="left:74px;top:43px;width:45.500px;height:4.500px;background:linear-gradient(90deg,#fff 0 10%,#000 10% 20%,#fff 20% 30%,#708098 30% 40%,#00a8b0 40% 50%,#7080b8 50% 60%,#12a0d8 60% 70%,#0068c0 70% 80%,#0078f0 80% 90%,#a03898 90%)"></div><div class="l" style="left:10.5px;top:40px;width:48px;background:#86b0f6;opacity:.55"></div><div class="l" style="left:10.5px;top:45.2px;width:48px;background:#86b0f6;opacity:.55"></div><div class="l" style="left:10.5px;top:50.4px;width:26.4px;background:#86b0f6;opacity:.55"></div></div><div class="th" style="top:199.5px"><span style="left:0;width:132px;text-align:center;top:7.500px;letter-spacing:.4px">统一色彩难点解析</span><div class="abs" style="left:37px;top:17.500px;width:59px;height:4.500px;background:#f4f6ff"></div><div class="abs" style="left:14.500px;top:25px;width:11px;height:11px;border-radius:6px;background:#eef4ff;border:1.500px solid #9cc0ff"></div><div class="l" style="left:26px;top:30.500px;width:87px;background:#6f98ee"></div><div class="l" style="left:21px;top:40.5px;width:92px;background:#a8c4f8;opacity:.6"></div><div class="l" style="left:21px;top:47px;width:50.6px;background:#a8c4f8;opacity:.6"></div><div class="abs" style="left:21px;top:52.500px;width:33px;height:10px;background:#f2f4fc"></div><div class="abs" style="left:22px;top:55px;width:31px;height:3.500px;background:linear-gradient(90deg,#e6a2f2 0 25%,#3a6ae0 25% 75%,#222 75%)"></div><div class="l" style="left:57px;top:59px;width:22px;background:#b8d0fa"></div><div class="l" style="left:21px;top:67.500px;width:92px;background:#7ea4f0"></div></div><div class="th thb" style="top:291px;"><svg class="abs" style="left:0;top:0" width="132" height="75" viewBox="0 0 132 75"><path d="M0 0H66.500C66 6 64 11 63.700 17S64 30 64.600 35 67 48 67 54 66.300 61 66.200 64.500L66 75H0z" fill="#1a4ed4"/><path d="M0 65Q30 61.500 66.200 64.500Q45 67.800 0 69.500z" fill="#94e2ff"/><path d="M0 69.500Q45 67.800 66.200 64.500L66 75H0z" fill="#c794f8"/><path d="M34 6l4.500-3.500 1.300 6z" fill="none" stroke="#cfe6ff" stroke-width=".8"/><circle cx="15.500" cy="10.500" r="1.300" fill="none" stroke="#cfe6ff" stroke-width=".7"/></svg><span style="left:13.500px;top:20.500px">矩阵布局</span><div class="l" style="left:14px;top:31px;width:14px;background:#5e86e6"></div><div class="abs" style="left:75.500px;top:15.500px;width:41.500px;height:28px;background:#f8f8fc;border-top:2px solid #9a9aa4"></div><div class="l" style="left:78px;top:20px;width:18px;background:#a8a8b4"></div><div class="l" style="left:78px;top:23.7px;width:30px;background:#a8a8b4"></div><div class="l" style="left:78px;top:27.4px;width:22px;background:#a8a8b4"></div><div class="l" style="left:78px;top:31.1px;width:32px;background:#a8a8b4"></div><div class="l" style="left:78px;top:34.8px;width:26px;background:#a8a8b4"></div><div class="l" style="left:78px;top:38.5px;width:12px;background:#a8a8b4"></div><div class="abs" style="left:75px;top:46px;width:7.500px;height:8.500px;border-radius:4px;background:radial-gradient(circle at 50% 60%,#f4c8a4 0 45%,#5a3a3a 50%)"></div><div class="abs" style="left:86.2px;top:46px;width:7.500px;height:8.500px;border-radius:4px;background:radial-gradient(circle at 50% 60%,#f4c8a4 0 45%,#5a3a3a 50%)"></div><div class="abs" style="left:97.4px;top:46px;width:7.500px;height:8.500px;border-radius:4px;background:radial-gradient(circle at 50% 60%,#f4c8a4 0 45%,#5a3a3a 50%)"></div><div class="abs" style="left:108.6px;top:46px;width:7.500px;height:8.500px;border-radius:4px;background:radial-gradient(circle at 50% 60%,#f4c8a4 0 45%,#5a3a3a 50%)"></div><div class="abs" style="left:75px;top:58.5px;width:7.500px;height:8.500px;border-radius:4px;background:radial-gradient(circle at 50% 60%,#f4c8a4 0 45%,#5a3a3a 50%)"></div><div class="abs" style="left:86.2px;top:58.5px;width:7.500px;height:8.500px;border-radius:4px;background:radial-gradient(circle at 50% 60%,#f4c8a4 0 45%,#5a3a3a 50%)"></div><div class="abs" style="left:97.4px;top:58.5px;width:7.500px;height:8.500px;border-radius:4px;background:radial-gradient(circle at 50% 60%,#f4c8a4 0 45%,#5a3a3a 50%)"></div><div class="abs" style="left:108.6px;top:58.5px;width:7.500px;height:8.500px;border-radius:4px;background:radial-gradient(circle at 50% 60%,#f4c8a4 0 45%,#5a3a3a 50%)"></div><div class="l" style="left:12px;top:37.5px;width:50px;background:#86b0f6;opacity:.5"></div><div class="l" style="left:12px;top:42px;width:27.5px;background:#86b0f6;opacity:.5"></div><div class="l" style="left:12px;top:47.5px;width:50px;background:#b8d0fa;opacity:.65"></div><div class="l" style="left:12px;top:51.7px;width:50px;background:#b8d0fa;opacity:.65"></div><div class="l" style="left:12px;top:55.9px;width:27.5px;background:#b8d0fa;opacity:.65"></div></div><div class="th thb" style="top:382px;"><svg class="abs" style="left:0;top:0" width="132" height="75" viewBox="0 0 132 75"><path d="M0 0H66.500C66 6 64 11 63.700 17S64 30 64.600 35 67 48 67 54 66.300 61 66.200 64.500L66 75H0z" fill="#1a4ed4"/><path d="M0 65Q30 61.500 66.200 64.500Q45 67.800 0 69.500z" fill="#94e2ff"/><path d="M0 69.500Q45 67.800 66.200 64.500L66 75H0z" fill="#c794f8"/><path d="M34 6l4.500-3.500 1.300 6z" fill="none" stroke="#cfe6ff" stroke-width=".8"/><circle cx="15.500" cy="10.500" r="1.300" fill="none" stroke="#cfe6ff" stroke-width=".7"/></svg><span style="left:13.500px;top:20.500px">环形布局</span><div class="l" style="left:14px;top:31px;width:14px;background:#5e86e6"></div><div class="abs" style="left:114.5px;top:32.0px;width:6.500px;height:7px;border-radius:3.500px;background:radial-gradient(circle at 50% 60%,#f4c8a4 0 45%,#5a3a3a 50%)"></div><div class="abs" style="left:113.1px;top:39.3px;width:6.500px;height:7px;border-radius:3.500px;background:radial-gradient(circle at 50% 60%,#f4c8a4 0 45%,#5a3a3a 50%)"></div><div class="abs" style="left:108.9px;top:45.4px;width:6.500px;height:7px;border-radius:3.500px;background:radial-gradient(circle at 50% 60%,#f4c8a4 0 45%,#5a3a3a 50%)"></div><div class="abs" style="left:102.8px;top:49.6px;width:6.500px;height:7px;border-radius:3.500px;background:radial-gradient(circle at 50% 60%,#f4c8a4 0 45%,#5a3a3a 50%)"></div><div class="abs" style="left:95.5px;top:51.0px;width:6.500px;height:7px;border-radius:3.500px;background:radial-gradient(circle at 50% 60%,#f4c8a4 0 45%,#5a3a3a 50%)"></div><div class="abs" style="left:88.2px;top:49.6px;width:6.500px;height:7px;border-radius:3.500px;background:radial-gradient(circle at 50% 60%,#f4c8a4 0 45%,#5a3a3a 50%)"></div><div class="abs" style="left:82.1px;top:45.4px;width:6.500px;height:7px;border-radius:3.500px;background:radial-gradient(circle at 50% 60%,#f4c8a4 0 45%,#5a3a3a 50%)"></div><div class="abs" style="left:77.9px;top:39.3px;width:6.500px;height:7px;border-radius:3.500px;background:radial-gradient(circle at 50% 60%,#f4c8a4 0 45%,#5a3a3a 50%)"></div><div class="abs" style="left:76.5px;top:32.0px;width:6.500px;height:7px;border-radius:3.500px;background:radial-gradient(circle at 50% 60%,#f4c8a4 0 45%,#5a3a3a 50%)"></div><div class="abs" style="left:77.9px;top:24.7px;width:6.500px;height:7px;border-radius:3.500px;background:radial-gradient(circle at 50% 60%,#f4c8a4 0 45%,#5a3a3a 50%)"></div><div class="abs" style="left:82.1px;top:18.6px;width:6.500px;height:7px;border-radius:3.500px;background:radial-gradient(circle at 50% 60%,#f4c8a4 0 45%,#5a3a3a 50%)"></div><div class="abs" style="left:88.2px;top:14.4px;width:6.500px;height:7px;border-radius:3.500px;background:radial-gradient(circle at 50% 60%,#f4c8a4 0 45%,#5a3a3a 50%)"></div><div class="abs" style="left:95.5px;top:13.0px;width:6.500px;height:7px;border-radius:3.500px;background:radial-gradient(circle at 50% 60%,#f4c8a4 0 45%,#5a3a3a 50%)"></div><div class="abs" style="left:102.8px;top:14.4px;width:6.500px;height:7px;border-radius:3.500px;background:radial-gradient(circle at 50% 60%,#f4c8a4 0 45%,#5a3a3a 50%)"></div><div class="abs" style="left:108.9px;top:18.6px;width:6.500px;height:7px;border-radius:3.500px;background:radial-gradient(circle at 50% 60%,#f4c8a4 0 45%,#5a3a3a 50%)"></div><div class="abs" style="left:113.1px;top:24.7px;width:6.500px;height:7px;border-radius:3.500px;background:radial-gradient(circle at 50% 60%,#f4c8a4 0 45%,#5a3a3a 50%)"></div><div class="abs" style="left:96px;top:32px;width:5.500px;height:6.500px;border-radius:3px;background:radial-gradient(circle at 50% 60%,#f4c8a4 0 45%,#5a3a3a 50%)"></div><div class="l" style="left:12px;top:37.5px;width:50px;background:#86b0f6;opacity:.5"></div><div class="l" style="left:12px;top:42px;width:27.5px;background:#86b0f6;opacity:.5"></div><div class="l" style="left:12px;top:47.5px;width:50px;background:#b8d0fa;opacity:.65"></div><div class="l" style="left:12px;top:51.7px;width:50px;background:#b8d0fa;opacity:.65"></div><div class="l" style="left:12px;top:55.9px;width:27.5px;background:#b8d0fa;opacity:.65"></div></div><div class="th thb" style="top:473.5px;"><svg class="abs" style="left:0;top:0" width="132" height="75" viewBox="0 0 132 75"><path d="M0 0H66.500C66 6 64 11 63.700 17S64 30 64.600 35 67 48 67 54 66.300 61 66.200 64.500L66 75H0z" fill="#1a4ed4"/><path d="M0 65Q30 61.500 66.200 64.500Q45 67.800 0 69.500z" fill="#94e2ff"/><path d="M0 69.500Q45 67.800 66.200 64.500L66 75H0z" fill="#c794f8"/><path d="M34 6l4.500-3.500 1.300 6z" fill="none" stroke="#cfe6ff" stroke-width=".8"/><circle cx="15.500" cy="10.500" r="1.300" fill="none" stroke="#cfe6ff" stroke-width=".7"/></svg><span style="left:13.500px;top:20.500px">裁剪图片</span><div class="l" style="left:14px;top:31px;width:14px;background:#5e86e6"></div><div class="abs" style="left:75px;top:17px;width:44px;height:22px;background:#f8f6fa;border-top:2px solid #e86070"></div><div class="abs" style="left:75px;top:42.500px;width:9px;height:6px;background:#f0e4ec"></div><div class="abs" style="left:86.5px;top:42.500px;width:9px;height:6px;background:#f0e4ec"></div><div class="abs" style="left:98px;top:42.500px;width:9px;height:6px;background:#f0e4ec"></div><div class="abs" style="left:109.5px;top:42.500px;width:9px;height:6px;background:#f0e4ec"></div><div class="l" style="left:12px;top:37.5px;width:50px;background:#b8d0fa;opacity:.6"></div><div class="l" style="left:12px;top:42px;width:27.5px;background:#b8d0fa;opacity:.6"></div></div><div class="abs" style="left:179px;top:3px;width:11px;height:514px;background:#5c5c5c"></div><div class="abs" style="left:180px;top:3px;width:9px;height:10px;background:#b8b8b8"></div><div class="abs" style="left:182px;top:6.500px;border-left:2.500px solid transparent;border-right:2.500px solid transparent;border-bottom:3px solid #444"></div><div class="abs" style="left:180px;top:140px;width:9px;height:101px;background:#9c9c9c"></div><div class="abs" style="left:180px;top:506px;width:9px;height:10px;background:#b8b8b8"></div><div class="abs" style="left:182px;top:510px;border-left:2.500px solid transparent;border-right:2.500px solid transparent;border-top:3px solid #444"></div>
</div>
<div id="mainbg" class="abs" style="left:194px;top:157px;width:1086px;height:519px;background:#666"></div>
<div class="abs" style="left:192px;top:157px;width:2px;height:519px;background:#7a7a7a"></div>
<div id="hruler" class="abs"><div class="abs" style="left:0;top:4px;width:675px;height:3px;background:repeating-linear-gradient(90deg,rgba(255,255,255,.35) 0 1px,transparent 1px 4.980px);background-position:2.300px 0"></div><span style="left:10.1px;background:#7d7d7d;width:12px;margin-left:4px">16</span><span style="left:30.0px;background:#7d7d7d;width:12px;margin-left:4px">15</span><span style="left:49.9px;background:#7d7d7d;width:12px;margin-left:4px">14</span><span style="left:69.8px;background:#7d7d7d;width:12px;margin-left:4px">13</span><span style="left:89.7px;background:#7d7d7d;width:12px;margin-left:4px">12</span><span style="left:109.6px;background:#7d7d7d;width:12px;margin-left:4px">11</span><span style="left:129.5px;background:#7d7d7d;width:12px;margin-left:4px">10</span><span style="left:149.4px;background:#7d7d7d;width:8px;margin-left:6px">9</span><span style="left:169.3px;background:#7d7d7d;width:8px;margin-left:6px">8</span><span style="left:189.2px;background:#7d7d7d;width:8px;margin-left:6px">7</span><span style="left:209.1px;background:#7d7d7d;width:8px;margin-left:6px">6</span><span style="left:229.0px;background:#7d7d7d;width:8px;margin-left:6px">5</span><span style="left:248.9px;background:#7d7d7d;width:8px;margin-left:6px">4</span><span style="left:268.8px;background:#7d7d7d;width:8px;margin-left:6px">3</span><span style="left:288.7px;background:#7d7d7d;width:8px;margin-left:6px">2</span><span style="left:308.6px;background:#7d7d7d;width:8px;margin-left:6px">1</span><span style="left:328.5px;background:#7d7d7d;width:8px;margin-left:6px">0</span><span style="left:348.4px;background:#7d7d7d;width:8px;margin-left:6px">1</span><span style="left:368.3px;background:#7d7d7d;width:8px;margin-left:6px">2</span><span style="left:388.2px;background:#7d7d7d;width:8px;margin-left:6px">3</span><span style="left:408.1px;background:#7d7d7d;width:8px;margin-left:6px">4</span><span style="left:428.0px;background:#7d7d7d;width:8px;margin-left:6px">5</span><span style="left:447.9px;background:#7d7d7d;width:8px;margin-left:6px">6</span><span style="left:467.8px;background:#7d7d7d;width:8px;margin-left:6px">7</span><span style="left:487.7px;background:#7d7d7d;width:8px;margin-left:6px">8</span><span style="left:507.6px;background:#7d7d7d;width:8px;margin-left:6px">9</span><span style="left:527.5px;background:#7d7d7d;width:12px;margin-left:4px">10</span><span style="left:547.4px;background:#7d7d7d;width:12px;margin-left:4px">11</span><span style="left:567.3px;background:#7d7d7d;width:12px;margin-left:4px">12</span><span style="left:587.2px;background:#7d7d7d;width:12px;margin-left:4px">13</span><span style="left:607.1px;background:#7d7d7d;width:12px;margin-left:4px">14</span><span style="left:627.0px;background:#7d7d7d;width:12px;margin-left:4px">15</span><span style="left:646.9px;background:#7d7d7d;width:12px;margin-left:4px">16</span></div>
<div id="vruler" class="abs"><div class="abs" style="left:4px;top:0;width:3px;height:380px;background:repeating-linear-gradient(180deg,rgba(255,255,255,.35) 0 1px,transparent 1px 4.950px);background-position:0 1.500px"></div><span style="top:5.8px"><b style="background:#7d7d7d;font-weight:bold;padding:0 1px">9</b></span><span style="top:25.6px"><b style="background:#7d7d7d;font-weight:bold;padding:0 1px">8</b></span><span style="top:45.4px"><b style="background:#7d7d7d;font-weight:bold;padding:0 1px">7</b></span><span style="top:65.2px"><b style="background:#7d7d7d;font-weight:bold;padding:0 1px">6</b></span><span style="top:85.0px"><b style="background:#7d7d7d;font-weight:bold;padding:0 1px">5</b></span><span style="top:104.8px"><b style="background:#7d7d7d;font-weight:bold;padding:0 1px">4</b></span><span style="top:124.6px"><b style="background:#7d7d7d;font-weight:bold;padding:0 1px">3</b></span><span style="top:144.4px"><b style="background:#7d7d7d;font-weight:bold;padding:0 1px">2</b></span><span style="top:164.2px"><b style="background:#7d7d7d;font-weight:bold;padding:0 1px">1</b></span><span style="top:184.0px"><b style="background:#7d7d7d;font-weight:bold;padding:0 1px">0</b></span><span style="top:203.8px"><b style="background:#7d7d7d;font-weight:bold;padding:0 1px">1</b></span><span style="top:223.6px"><b style="background:#7d7d7d;font-weight:bold;padding:0 1px">2</b></span><span style="top:243.4px"><b style="background:#7d7d7d;font-weight:bold;padding:0 1px">3</b></span><span style="top:263.2px"><b style="background:#7d7d7d;font-weight:bold;padding:0 1px">4</b></span><span style="top:283.0px"><b style="background:#7d7d7d;font-weight:bold;padding:0 1px">5</b></span><span style="top:302.8px"><b style="background:#7d7d7d;font-weight:bold;padding:0 1px">6</b></span><span style="top:322.6px"><b style="background:#7d7d7d;font-weight:bold;padding:0 1px">7</b></span><span style="top:342.4px"><b style="background:#7d7d7d;font-weight:bold;padding:0 1px">8</b></span><span style="top:362.2px"><b style="background:#7d7d7d;font-weight:bold;padding:0 1px">9</b></span></div>
<svg class="abs" style="left:404px;top:235px" width="673.700" height="380" viewBox="404 235 673.700 380">
<defs>
<linearGradient id="gp" x1="740" x2="1078" y1="0" y2="0" gradientUnits="userSpaceOnUse"><stop offset="0" stop-color="#7468ec"/><stop offset=".25" stop-color="#9674f4"/><stop offset=".55" stop-color="#c27efa"/><stop offset=".85" stop-color="#ea8afd"/><stop offset="1" stop-color="#f08cfc"/></linearGradient>
<linearGradient id="gl" x1="404" x2="745" y1="0" y2="0" gradientUnits="userSpaceOnUse"><stop offset="0" stop-color="#f090fa"/><stop offset=".5" stop-color="#c492f8"/><stop offset="1" stop-color="#aaa4ff"/></linearGradient>
<linearGradient id="gw" x1="740" x2="1078" y1="0" y2="0" gradientUnits="userSpaceOnUse"><stop offset="0" stop-color="#fff" stop-opacity=".16"/><stop offset="1" stop-color="#fff" stop-opacity=".02"/></linearGradient>
</defs>
<rect x="404" y="235" width="675" height="380" fill="url(#gp)"/>
<path d="M404 235H744C742 262 733 290 730 322S731 388 734 412 746 478 746 512 743 548 742 566L740 615H404z" fill="#1a50d8"/>
<path d="M404 562Q600 548 742 564Q640 580 404 590z" fill="#94e2ff"/>
<path d="M404 590Q640 580 742 564L740 615H404z" fill="url(#gl)"/>
<path d="M742 564Q900 548 1078 592V615H740z" fill="url(#gw)"/>
<path d="M577.500 267.500L599.500 248.700 607 278.700z" fill="none" stroke="#5ac4fa" stroke-width="1.600"/>
<text x="474" y="369" font-size="31" font-weight="900" fill="#fff" font-family="Noto Sans CJK SC,sans-serif">统一色彩</text>
<rect x="476" y="385.500" width="110" height="1" fill="#5c86e8" opacity=".6"/>
<g font-size="12.500" fill="#8ccaff" font-family="Noto Sans CJK SC,sans-serif">
<text x="565.500" y="438.500" letter-spacing="2.250">色统一为同一个颜色，</text>
<text x="568.700" y="461.500" letter-spacing=".55">，直接统一颜色即可，</text>
<text x="564" y="483.500" letter-spacing=".15">还挺费劲的，不建议使用</text>
</g>
</svg>
<svg class="abs" style="left:1077.700px;top:395px" width="110" height="180" viewBox="1077.700 395 110 180"><circle cx="1089" cy="484.700" r="80.600" fill="none" stroke="#eea6fc" stroke-width="7.400"/></svg>
<div class="hr" style="left:216px;top:293px;width:1050px;opacity:.75"></div>
<div class="hr" style="left:216px;top:310px;width:1050px"></div>
<div class="hr" style="left:216px;top:574px;width:1050px"></div>
<div class="hr" style="left:216px;top:580px;width:1050px;opacity:.8"></div>
<div class="vr" style="left:1042px;top:178px;height:57px"></div>
<div class="vr" style="left:1042px;top:615px;height:56px"></div>
<div id="dlg" class="abs"><div class="abs" style="left:0;top:0;width:254px;height:17.500px;background:#7c7c7c"></div><span style="left:5px;top:2px;font-size:10px;line-height:13px;color:#e8e8e8">统一色彩</span><span style="left:220px;top:1.500px;font-size:11.500px;line-height:14px;color:#d0d0d0">?</span><div class="abs" style="left:233px;top:3px;width:1px;height:11px;background:#949494"></div><svg class="abs" style="left:240px;top:4.500px" width="8" height="8" viewBox="0 0 8 8"><path d="M1 1l6 6M7 1l-6 6" stroke="#f0f0f0" stroke-width="1.200"/></svg><span style="left:8px;top:29.500px">当前PPT所使用颜色:</span><div class="abs" style="left:8.0px;top:47.300px;width:23px;height:23px;background:#ffffff"></div><div class="abs" style="left:30.7px;top:47.300px;width:23px;height:23px;background:#e6a2f2"></div><div class="abs" style="left:53.4px;top:47.300px;width:23px;height:23px;background:#f28af2"></div><div class="abs" style="left:76.1px;top:47.300px;width:23px;height:23px;background:#a2e2f8"></div><div class="abs" style="left:98.8px;top:47.300px;width:23px;height:23px;background:#4aa2f8"></div><div class="abs" style="left:121.5px;top:47.300px;width:23px;height:23px;background:#8878f0"></div><div class="abs" style="left:144.2px;top:47.300px;width:23px;height:23px;background:#38c2e2"></div><div class="abs" style="left:166.9px;top:47.300px;width:23px;height:23px;background:#5a68e2"></div><div class="abs" style="left:189.6px;top:47.300px;width:23px;height:23px;background:#3070e0"></div><div class="abs" style="left:212.3px;top:47.300px;width:23px;height:23px;background:#2a68da"></div><div class="abs" style="left:8.0px;top:70.200px;width:23px;height:22.500px;background:#2058da"></div><div class="abs" style="left:30.7px;top:70.200px;width:23px;height:22.500px;background:#1a50d2"></div><div class="abs" style="left:53.4px;top:70.200px;width:23px;height:22.500px;background:#2a72d2"></div><div class="abs" style="left:76.1px;top:70.200px;width:23px;height:22.500px;background:#1a52ca"></div><div class="abs" style="left:98.8px;top:70.200px;width:23px;height:22.500px;background:#1a58c2"></div><div class="abs" style="left:121.5px;top:70.200px;width:23px;height:22.500px;background:#0088b2"></div><div class="abs" style="left:144.2px;top:70.200px;width:23px;height:22.500px;background:#282828"></div><div class="abs" style="left:236px;top:47px;width:7px;height:46px;background:#f4f4f4"></div><div class="abs" style="left:236px;top:57px;width:7px;height:24.500px;background:#bcbcbc"></div><div class="abs" style="left:237px;top:50px;border-left:2.500px solid transparent;border-right:2.500px solid transparent;border-bottom:3px solid #888"></div><div class="abs" style="left:237px;top:86.500px;border-left:2.500px solid transparent;border-right:2.500px solid transparent;border-top:3px solid #888"></div><svg class="abs" style="left:8px;top:97.500px" width="110" height="18" viewBox="0 0 110 18" fill="none" stroke="#444" stroke-width="1.200"><path d="M4.500 5l4 3.500 4-3.500M4.500 9l4 3.500 4-3.500"/><path d="M26 8.500l4-3.500 4 3.500M26 12.500l4-3.500 4 3.500"/><circle cx="52" cy="9" r="4.500"/><path d="M49 12l6-6"/><path d="M70.500 7h4.500a3 3 0 0 1 0 6h-2.500M73 4.500l-2.500 2.500 2.500 2.500"/><path d="M98.500 5.500a4.500 4.500 0 1 1-4-1M92.500 2.500l2.500 2-2.500 2.500"/><path d="M19.500 1v16M41.500 1v16M62.500 1v16M84.500 1v16" stroke="#efefef" stroke-width="1"/></svg><span style="left:8px;top:122.500px">当前PPT主题色:</span><div class="abs" style="left:8.0px;top:139.500px;width:24px;height:22.500px;background:#ffffff"></div><div class="abs" style="left:31.5px;top:139.500px;width:24px;height:22.500px;background:#000000"></div><div class="abs" style="left:55.0px;top:139.500px;width:24px;height:22.500px;background:#ffffff"></div><div class="abs" style="left:78.5px;top:139.500px;width:24px;height:22.500px;background:#708098"></div><div class="abs" style="left:102.0px;top:139.500px;width:24px;height:22.500px;background:#00a8b0"></div><div class="abs" style="left:125.5px;top:139.500px;width:24px;height:22.500px;background:#7080b8"></div><div class="abs" style="left:149.0px;top:139.500px;width:24px;height:22.500px;background:#12a0d8"></div><div class="abs" style="left:172.5px;top:139.500px;width:24px;height:22.500px;background:#0068c0"></div><div class="abs" style="left:196.0px;top:139.500px;width:24px;height:22.500px;background:#0078f0"></div><div class="abs" style="left:219.5px;top:139.500px;width:24px;height:22.500px;background:#a03898"></div><div class="abs" style="left:11.500px;top:173px;width:5px;height:5px;border-radius:3px;background:#e04a38"></div><span style="left:23px;top:171px">所有幻灯片</span><span style="left:103px;top:171px">所选幻灯片</span><span style="left:183px;top:171px">幻灯片序列</span><svg class="abs" style="left:10px;top:190px" width="9" height="9" viewBox="0 0 9 9"><path d="M1 5l2.500 2.500 4.500-6.500" fill="none" stroke="#c0392b" stroke-width="1.300"/></svg><span style="left:23px;top:191px">包含隐藏页面</span><div class="abs" style="left:8px;top:207px;width:51px;height:21px;border:1px solid #ececec"></div><span style="left:25px;top:212.500px;font-weight:bold">应用</span></div>
<div class="abs" style="left:1267px;top:160px;width:12px;height:468px;background:#5a5a5a"></div>
<div class="abs" style="left:1268px;top:160px;width:10px;height:10px;background:#b8b8b8"></div><div class="abs" style="left:1270.500px;top:163.500px;border-left:2.500px solid transparent;border-right:2.500px solid transparent;border-bottom:3px solid #444"></div>
<div class="abs" style="left:1268px;top:304px;width:10px;height:15px;background:#b0b0b0"></div>
<div class="abs" style="left:1268px;top:618px;width:10px;height:10px;background:#b8b8b8"></div><div class="abs" style="left:1270.500px;top:622px;border-left:2.500px solid transparent;border-right:2.500px solid transparent;border-top:3px solid #444"></div>
<svg class="abs" style="left:1269px;top:632px" width="8" height="22" viewBox="0 0 8 22" fill="#3c3c3c"><path d="M4 0l3 2.500h-6zM4 3l3 2.500h-6zM1 14.500h6l-3 2.500zM1 17.500h6l-3 2.500z"/><path d="M1 6.500h6M1 13.500h6" stroke="#3c3c3c"/></svg>

<div id="shapes" class="abs">
<div class="hd" style="top:0.5px">最近使用的形状</div>
<svg style="left:1.3px;top:19px" width="16" height="16" viewBox="0 0 16 16"><rect x="2" y="5.500" width="12" height="5" rx="2.500"/></svg>
<svg style="left:17.3px;top:19px" width="16" height="16" viewBox="0 0 16 16"><rect x="2.500" y="3.500" width="11" height="9"/><path d="M8.500 6.500h3.500M4.500 9.500h7.500" stroke-width=".7"/><text x="4" y="8" font-size="4.500" stroke="none" fill="#444" font-family="Liberation Sans,sans-serif">A</text></svg>
<svg style="left:33.2px;top:19px" width="16" height="16" viewBox="0 0 16 16"><rect x="2.500" y="3.500" width="11" height="9"/><path d="M5 5.500v5M7 5.500v5" stroke-width=".7" stroke-dasharray="1 .6"/><text x="8.800" y="9" font-size="4.500" stroke="none" fill="#444" font-family="Liberation Sans,sans-serif">A</text></svg>
<svg style="left:49.2px;top:19px" width="16" height="16" viewBox="0 0 16 16"><path d="M3 3l10 10"/></svg>
<svg style="left:65.1px;top:19px" width="16" height="16" viewBox="0 0 16 16"><path d="M3 3l10 10M13 9v4h-4"/></svg>
<svg style="left:81.1px;top:19px" width="16" height="16" viewBox="0 0 16 16"><rect x="1.500" y="3.500" width="13" height="9"/></svg>
<svg style="left:97.1px;top:19px" width="16" height="16" viewBox="0 0 16 16"><ellipse cx="8" cy="8" rx="6.500" ry="4.500"/></svg>
<svg style="left:113.0px;top:19px" width="16" height="16" viewBox="0 0 16 16"><rect x="1.500" y="3.500" width="13" height="9" rx="2.500"/></svg>
<svg style="left:129.0px;top:19px" width="16" height="16" viewBox="0 0 16 16"><path d="M8 2.500l5.500 10.500h-11z"/></svg>
<svg style="left:144.9px;top:19px" width="16" height="16" viewBox="0 0 16 16"><path d="M2.500 4h5.500v8h5.500"/></svg>
<svg style="left:160.9px;top:19px" width="16" height="16" viewBox="0 0 16 16"><path d="M2.500 4h5.500v8h5.500M11.500 10l2 2-2 2"/></svg>
<svg style="left:176.9px;top:19px" width="16" height="16" viewBox="0 0 16 16"><path d="M1.500 6h7v-3.500l6 5.500-6 5.500v-3.500h-7z"/></svg>
<svg style="left:1.3px;top:34.5px" width="16" height="16" viewBox="0 0 16 16"><path d="M6 1.500v7h-3.500l5.500 6 5.500-6h-3.500v-7z"/></svg>
<svg style="left:17.3px;top:34.5px" width="16" height="16" viewBox="0 0 16 16"><path d="M2.500 13v-5.500c0-3 2.500-4.500 5-4.500s3 1 5 1v4h-3.500c0 1.500 1.500 1.500 4 1.500v3.500z"/></svg>
<svg style="left:33.2px;top:34.5px" width="16" height="16" viewBox="0 0 16 16"><path d="M6 2.500c3 1 3 2 0 3.500s2 2 3 3-3 1-1 3 2 1 1 2" stroke-width="1.300"/></svg>
<svg style="left:49.2px;top:34.5px" width="16" height="16" viewBox="0 0 16 16"><path d="M2.500 3.500c6 0 10 4 10 10"/></svg>
<svg style="left:65.1px;top:34.5px" width="16" height="16" viewBox="0 0 16 16"><path d="M2 12.500C4.500 12.500 4 3.500 7 3.500S9.500 12.500 14 12.500"/></svg>
<svg style="left:81.1px;top:34.5px" width="16" height="16" viewBox="0 0 16 16"><path d="M10 2.500C8 2.500 8.500 3.500 8.500 5V6.500C8.500 7.500 8 8 6.500 8C8 8 8.500 8.500 8.500 9.500V11C8.500 12.500 8 13.500 10 13.500"/></svg>
<div class="hd" style="top:52.5px">线条</div>
<svg style="left:1.3px;top:69.5px" width="16" height="16" viewBox="0 0 16 16"><path d="M3 3l10 10"/></svg>
<svg style="left:17.3px;top:69.5px" width="16" height="16" viewBox="0 0 16 16"><path d="M3 3l10 10M13 9v4h-4"/></svg>
<svg style="left:33.2px;top:69.5px" width="16" height="16" viewBox="0 0 16 16"><path d="M3 3l10 10M13 9v4h-4M3 7v-4h4"/></svg>
<svg style="left:49.2px;top:69.5px" width="16" height="16" viewBox="0 0 16 16"><path d="M2.500 4h5.500v8h5.500"/></svg>
<svg style="left:65.1px;top:69.5px" width="16" height="16" viewBox="0 0 16 16"><path d="M2.500 4h5.500v8h5.500M11.500 10l2 2-2 2"/></svg>
<svg style="left:81.1px;top:69.5px" width="16" height="16" viewBox="0 0 16 16"><path d="M2.500 4h5.500v8h5.500M11.500 10l2 2-2 2M4.500 2l-2 2 2 2"/></svg>
<svg style="left:97.1px;top:69.5px" width="16" height="16" viewBox="0 0 16 16"><path d="M5 3C11 3 11 8 8 8S5 13 11 13"/></svg>
<svg style="left:113.0px;top:69.5px" width="16" height="16" viewBox="0 0 16 16"><path d="M4.500 3C10.500 3 10.500 8 7.500 8S4.500 13 12 13M10 11l2 2-2 2"/></svg>
<svg style="left:129.0px;top:69.5px" width="16" height="16" viewBox="0 0 16 16"><path d="M4 3C10.500 3 10.500 8 7.500 8S4.500 13 12 13M10 11l2 2-2 2M6 1l-2 2 2 2"/></svg>
<svg style="left:144.9px;top:69.5px" width="16" height="16" viewBox="0 0 16 16"><path d="M2 12.500C4.500 12.500 4 3.500 7 3.500S9.500 12.500 14 12.500"/></svg>
<svg style="left:160.9px;top:69.5px" width="16" height="16" viewBox="0 0 16 16"><path d="M2.500 13v-5.500c0-3 2.500-4.500 5-4.500s3 1 5 1v4h-3.500c0 1.500 1.500 1.500 4 1.500v3.500z"/></svg>
<svg style="left:176.9px;top:69.5px" width="16" height="16" viewBox="0 0 16 16"><path d="M6 2.500c3 1 3 2 0 3.500s2 2 3 3-3 1-1 3 2 1 1 2" stroke-width="1.300"/></svg>
<div class="hd" style="top:87.5px">矩形</div>
<svg style="left:1.3px;top:105px" width="16" height="16" viewBox="0 0 16 16"><rect x="1.500" y="3.500" width="13" height="9"/></svg>
<svg style="left:17.3px;top:105px" width="16" height="16" viewBox="0 0 16 16"><rect x="1.500" y="3.500" width="13" height="9" rx="2.500"/></svg>
<svg style="left:33.2px;top:105px" width="16" height="16" viewBox="0 0 16 16"><path d="M1.500 3.500h9.500l3.500 3.500v5.500h-13z"/></svg>
<svg style="left:49.2px;top:105px" width="16" height="16" viewBox="0 0 16 16"><path d="M5 3.500h6l3.500 3.500v5.500h-13v-5.500z"/></svg>
<svg style="left:65.1px;top:105px" width="16" height="16" viewBox="0 0 16 16"><path d="M1.500 3.500h9.500l3.500 3.500v5.500h-9.500l-3.500-3.500z"/></svg>
<svg style="left:81.1px;top:105px" width="16" height="16" viewBox="0 0 16 16"><path d="M4 3.500h7l3.500 3.500v5.500h-13v-6.500a2.500 2.500 0 0 1 2.500-2.500z"/></svg>
<svg style="left:97.1px;top:105px" width="16" height="16" viewBox="0 0 16 16"><path d="M1.500 3.500h10.500a2.500 2.500 0 0 1 2.500 2.500v6.500h-13z"/></svg>
<svg style="left:113.0px;top:105px" width="16" height="16" viewBox="0 0 16 16"><path d="M4 3.500h8a2.500 2.500 0 0 1 2.500 2.500v6.500h-13v-6.500a2.500 2.500 0 0 1 2.500-2.500z"/></svg>
<svg style="left:129.0px;top:105px" width="16" height="16" viewBox="0 0 16 16"><path d="M4 3.500h10.500v6.500a2.500 2.500 0 0 1-2.500 2.500h-10.500v-6.500a2.500 2.500 0 0 1 2.500-2.500z"/></svg>
<div class="hd" style="top:122px">基本形状</div>
<svg style="left:1.3px;top:140.5px" width="16" height="16" viewBox="0 0 16 16"><rect x="2.500" y="3.500" width="11" height="9"/><path d="M8.500 6.500h3.500M4.500 9.500h7.500" stroke-width=".7"/><text x="4" y="8" font-size="4.500" stroke="none" fill="#444" font-family="Liberation Sans,sans-serif">A</text></svg>
<svg style="left:17.3px;top:140.5px" width="16" height="16" viewBox="0 0 16 16"><rect x="2.500" y="3.500" width="11" height="9"/><path d="M5 5.500v5M7 5.500v5" stroke-width=".7" stroke-dasharray="1 .6"/><text x="8.800" y="9" font-size="4.500" stroke="none" fill="#444" font-family="Liberation Sans,sans-serif">A</text></svg>
<svg style="left:33.2px;top:140.5px" width="16" height="16" viewBox="0 0 16 16"><ellipse cx="8" cy="8" rx="6.500" ry="4.500"/></svg>
<svg style="left:49.2px;top:140.5px" width="16" height="16" viewBox="0 0 16 16"><path d="M8 2.500l5.500 10.500h-11z"/></svg>
<svg style="left:65.1px;top:140.5px" width="16" height="16" viewBox="0 0 16 16"><path d="M2.500 2.500v10.500h11z"/></svg>
<svg style="left:81.1px;top:140.5px" width="16" height="16" viewBox="0 0 16 16"><path d="M5 3.500h9.500l-3.500 9h-9.500z"/></svg>
<svg style="left:97.1px;top:140.5px" width="16" height="16" viewBox="0 0 16 16"><path d="M5 3.500h6l3.500 9h-13z"/></svg>
<svg style="left:113.0px;top:140.5px" width="16" height="16" viewBox="0 0 16 16"><path d="M8 2l6 6-6 6-6-6z"/></svg>
<svg style="left:129.0px;top:140.5px" width="16" height="16" viewBox="0 0 16 16"><path d="M8.0 2.0L14.2 6.5L11.8 13.8L4.2 13.8L1.8 6.5z"/></svg>
<svg style="left:144.9px;top:140.5px" width="16" height="16" viewBox="0 0 16 16"><path d="M14.5 8.0L11.2 12.8L4.8 12.8L1.5 8.0L4.7 3.2L11.2 3.2z"/></svg>
<svg style="left:160.9px;top:140.5px" width="16" height="16" viewBox="0 0 16 16"><circle cx="8" cy="8" r="6"/><text x="8" y="9.600" font-size="4.5" text-anchor="middle" stroke="none" fill="#444" font-family="Liberation Sans,sans-serif">7</text></svg>
<svg style="left:176.9px;top:140.5px" width="16" height="16" viewBox="0 0 16 16"><path d="M14.0 10.5L10.5 14.0L5.5 14.0L2.0 10.5L2.0 5.5L5.5 2.0L10.5 2.0L14.0 5.5z"/><text x="8" y="9.600" font-size="4.5" text-anchor="middle" stroke="none" fill="#444" font-family="Liberation Sans,sans-serif">8</text></svg>
<svg style="left:1.3px;top:157px" width="16" height="16" viewBox="0 0 16 16"><path d="M14.5 8.0L13.3 11.8L10.0 14.2L6.0 14.2L2.7 11.8L1.5 8.0L2.7 4.2L6.0 1.8L10.0 1.8L13.3 4.2z"/><text x="8" y="9.600" font-size="4" text-anchor="middle" stroke="none" fill="#444" font-family="Liberation Sans,sans-serif">10</text></svg>
<svg style="left:17.3px;top:157px" width="16" height="16" viewBox="0 0 16 16"><path d="M14.3 9.7L12.6 12.6L9.7 14.3L6.3 14.3L3.4 12.6L1.7 9.7L1.7 6.3L3.4 3.4L6.3 1.7L9.7 1.7L12.6 3.4L14.3 6.3z"/><text x="8" y="9.600" font-size="4" text-anchor="middle" stroke="none" fill="#444" font-family="Liberation Sans,sans-serif">12</text></svg>
<svg style="left:33.2px;top:157px" width="16" height="16" viewBox="0 0 16 16"><path d="M8 8h6a6 6 0 1 1-6-6z"/></svg>
<svg style="left:49.2px;top:157px" width="16" height="16" viewBox="0 0 16 16"><path d="M8 2c2 3 5.500 5 5.500 8a5.500 5.500 0 0 1-11 0c0-3 3.500-5 5.500-8z"/></svg>
<svg style="left:65.1px;top:157px" width="16" height="16" viewBox="0 0 16 16"><path d="M14 2.500v5.500a6 6 0 1 1-6-5.500z"/></svg>
<svg style="left:81.1px;top:157px" width="16" height="16" viewBox="0 0 16 16"><rect x="2.500" y="2.500" width="11" height="11"/><rect x="4.500" y="4.500" width="7" height="7"/></svg>
<svg style="left:97.1px;top:157px" width="16" height="16" viewBox="0 0 16 16"><path d="M2.500 2.500h11l-2 2.500h-6.500v6.500l-2.500 2z"/></svg>
<svg style="left:113.0px;top:157px" width="16" height="16" viewBox="0 0 16 16"><path d="M3 2.500h4.500v6.500h6v4.500h-10.500z"/></svg>
<svg style="left:129.0px;top:157px" width="16" height="16" viewBox="0 0 16 16"><path d="M2.500 13.500v-4l9-7h2.500z"/></svg>
<svg style="left:144.9px;top:157px" width="16" height="16" viewBox="0 0 16 16"><path d="M6 2h4v4h4v4h-4v4h-4v-4h-4v-4h4z"/></svg>
<svg style="left:160.9px;top:157px" width="16" height="16" viewBox="0 0 16 16"><path d="M4.500 2.500h7a2 2 0 0 0 2 2v7a2 2 0 0 0-2 2h-7a2 2 0 0 0-2-2v-7a2 2 0 0 0 2-2z"/></svg>
<svg style="left:176.9px;top:157px" width="16" height="16" viewBox="0 0 16 16"><path d="M4 4v8.500c0 1.500 8 1.500 8 0v-8.500M4 4c0 1.500 8 1.500 8 0s-8-1.500-8 0z"/></svg>
<svg style="left:1.3px;top:172.5px" width="16" height="16" viewBox="0 0 16 16"><path d="M2.500 5.500h8v8h-8zM2.500 5.500l3-3h8l-3 3M13.500 2.500v8l-3 3"/></svg>
<svg style="left:17.3px;top:172.5px" width="16" height="16" viewBox="0 0 16 16"><rect x="2.500" y="2.500" width="11" height="11"/><rect x="4.500" y="4.500" width="7" height="7"/><path d="M2.500 2.500l2 2M13.500 2.500l-2 2M2.500 13.500l2-2M13.500 13.500l-2-2" stroke-width=".7"/></svg>
<svg style="left:33.2px;top:172.5px" width="16" height="16" viewBox="0 0 16 16"><circle cx="8" cy="8" r="6"/><circle cx="8" cy="8" r="3.500"/></svg>
<svg style="left:49.2px;top:172.5px" width="16" height="16" viewBox="0 0 16 16"><circle cx="8" cy="8" r="6"/><circle cx="8" cy="8" r="3.800"/><path d="M5 5.500l5.500 5.500M5.500 5l5.500 5.500" stroke-width=".8"/></svg>
<svg style="left:65.1px;top:172.5px" width="16" height="16" viewBox="0 0 16 16"><path d="M2 11a6 6 0 0 1 12 0h-3a3 3 0 0 0-6 0z"/></svg>
<svg style="left:81.1px;top:172.5px" width="16" height="16" viewBox="0 0 16 16"><path d="M2.500 2.500h11v8l-3 3h-8zM13.500 10.500h-3v3"/></svg>
<svg style="left:97.1px;top:172.5px" width="16" height="16" viewBox="0 0 16 16"><circle cx="8" cy="8" r="6"/><path d="M5 9.500c1.500 2 4.500 2 6 0"/><circle cx="6" cy="6.500" r=".6" fill="#444"/><circle cx="10" cy="6.500" r=".6" fill="#444"/></svg>
<svg style="left:113.0px;top:172.5px" width="16" height="16" viewBox="0 0 16 16"><path d="M8 13.500c-3-2.500-6-4.500-6-7.500a3 3 0 0 1 6-1a3 3 0 0 1 6 1c0 3-3 5-6 7.500z"/></svg>
<svg style="left:129.0px;top:172.5px" width="16" height="16" viewBox="0 0 16 16"><path d="M5 2.500l3-.5 2.500 4-1.500.5 3.500 3-1.500.5 2.500 4-6-3 1.500-.8-4-2.500 1.500-.7z"/></svg>
<svg style="left:144.9px;top:172.5px" width="16" height="16" viewBox="0 0 16 16"><circle cx="8" cy="8" r="3"/><path d="M8 1.500v2M8 12.500v2M1.500 8h2M12.500 8h2M3.500 3.500l1.500 1.500M11 11l1.500 1.500M12.500 3.500l-1.500 1.500M5 11l-1.500 1.500"/></svg>
<svg style="left:160.9px;top:172.5px" width="16" height="16" viewBox="0 0 16 16"><path d="M11.500 2a6.500 6.500 0 1 0 0 12a7 7 0 0 1 0-12z"/></svg>
<svg style="left:176.9px;top:172.5px" width="16" height="16" viewBox="0 0 16 16"><path d="M4 11.500a2.500 2.500 0 0 1-1-4.500a2.500 2.500 0 0 1 3.500-2.500a3 3 0 0 1 5 .5a2.500 2.500 0 0 1 2 4a2.500 2.500 0 0 1-3 3a3 3 0 0 1-4 .5a3 3 0 0 1-2.500-1z"/></svg>
<svg style="left:1.3px;top:188.5px" width="16" height="16" viewBox="0 0 16 16"><path d="M2.500 3.500c6 0 10 4 10 10"/></svg>
<svg style="left:17.3px;top:188.5px" width="16" height="16" viewBox="0 0 16 16"><path d="M5.500 2.500c-2.500 0-3 0-3 2v7c0 2 .5 2 3 2M10.500 2.500c2.500 0 3 0 3 2v7c0 2-.5 2-3 2"/></svg>
<svg style="left:33.2px;top:188.5px" width="16" height="16" viewBox="0 0 16 16"><path d="M6 2.5C4 2.5 4.5 3.5 4.5 5V6.5C4.5 7.5 4 8 2.5 8C4 8 4.5 8.5 4.5 9.5V11C4.5 12.5 4 13.5 6 13.5M10 2.5C12 2.5 11.5 3.5 11.5 5V6.5C11.5 7.5 12 8 13.5 8C12 8 11.5 8.5 11.5 9.5V11C11.5 12.5 12 13.5 10 13.5"/></svg>
<svg style="left:49.2px;top:188.5px" width="16" height="16" viewBox="0 0 16 16"><path d="M10.500 2.500c-3 0-3.500 0-3.500 2v7c0 2 .5 2 3.500 2"/></svg>
<svg style="left:65.1px;top:188.5px" width="16" height="16" viewBox="0 0 16 16"><path d="M5.500 2.500c3 0 3.500 0 3.500 2v7c0 2-.5 2-3.500 2"/></svg>
<svg style="left:81.1px;top:188.5px" width="16" height="16" viewBox="0 0 16 16"><path d="M10 2.500C8 2.500 8.500 3.500 8.500 5V6.500C8.500 7.500 8 8 6.500 8C8 8 8.500 8.500 8.500 9.500V11C8.500 12.500 8 13.500 10 13.500"/></svg>
<svg style="left:97.1px;top:188.5px" width="16" height="16" viewBox="0 0 16 16"><path d="M6 2.500C8 2.500 7.500 3.500 7.500 5V6.500C7.500 7.500 8 8 9.500 8C8 8 7.500 8.500 7.500 9.500V11C7.500 12.500 8 13.500 6 13.500"/></svg>
<div class="hd" style="top:205.5px">箭头总汇</div>
<svg style="left:1.3px;top:223.5px" width="16" height="16" viewBox="0 0 16 16"><path d="M1.500 6h7v-3.500l6 5.500-6 5.500v-3.500h-7z"/></svg>
<svg style="left:17.3px;top:223.5px" width="16" height="16" viewBox="0 0 16 16"><path d="M14.500 6h-7v-3.500l-6 5.500 6 5.500v-3.500h7z"/></svg>
<svg style="left:33.2px;top:223.5px" width="16" height="16" viewBox="0 0 16 16"><path d="M6 14.500v-7h-3.500l5.500-6 5.500 6h-3.500v7z"/></svg>
<svg style="left:49.2px;top:223.5px" width="16" height="16" viewBox="0 0 16 16"><path d="M6 1.500v7h-3.500l5.500 6 5.500-6h-3.500v-7z"/></svg>
<svg style="left:65.1px;top:223.5px" width="16" height="16" viewBox="0 0 16 16"><path d="M1.500 8l4.500-5v3h4v-3l4.500 5-4.500 5v-3h-4v3z"/></svg>
<svg style="left:81.1px;top:223.5px" width="16" height="16" viewBox="0 0 16 16"><path d="M8 1.500l5 4.500h-3v4h3l-5 4.500-5-4.500h3v-4h-3z"/></svg>
<svg style="left:97.1px;top:223.5px" width="16" height="16" viewBox="0 0 16 16"><path d="M8 1.500l2.500 2.500h-1.500v3h3v-1.500l2.500 2.500-2.500 2.500v-1.500h-3v3h1.500l-2.500 2.500-2.500-2.500h1.500v-3h-3v1.500l-2.500-2.500 2.500-2.500v1.500h3v-3h-1.500z"/></svg>
<svg style="left:113.0px;top:223.5px" width="16" height="16" viewBox="0 0 16 16"><path d="M8 1.500l3 3h-2v5h3v-1.500l2.500 2.500-2.500 2.500v-1.500h-8v1.500l-2.500-2.500 2.500-2.500v1.500h3v-5h-2z"/></svg>
<svg style="left:129.0px;top:223.5px" width="16" height="16" viewBox="0 0 16 16"><path d="M2.500 13.500v-6c0-2.500 1.500-3.500 3.500-3.500h4v-2l4 3.500-4 3.500v-2h-3.500c-1 0-1 .5-1 1v5.500z"/></svg>
<svg style="left:144.9px;top:223.5px" width="16" height="16" viewBox="0 0 16 16"><path d="M2.500 13.500v-7a4.500 4.500 0 0 1 9 0v1.500h2l-3.500 3.500-3.500-3.500h2v-1.500a1.500 1.500 0 0 0-3 0v7z"/></svg>
<svg style="left:160.9px;top:223.5px" width="16" height="16" viewBox="0 0 16 16"><path d="M1.500 10.500l3.500-3.500v2h4.500v-4.500h-2l3.500-3.500 3.500 3.500h-2v7.500h-7.500v2z"/></svg>
<svg style="left:176.9px;top:223.5px" width="16" height="16" viewBox="0 0 16 16"><path d="M2 9.500h7.500v-5h-2l3.500-3.500 3.500 3.500h-2v8h-10.500z"/></svg>
<svg style="left:1.3px;top:239.5px" width="16" height="16" viewBox="0 0 16 16"><path d="M10 2c-7 0-8 9-1 10v1.500l4-3-4-3v1.500c-3-1-3-5 1-5z"/></svg>
<svg style="left:17.3px;top:239.5px" width="16" height="16" viewBox="0 0 16 16"><path d="M6 2c7 0 8 9 1 10v1.500l-4-3 4-3v1.500c3-1 3-5-1-5z"/></svg>
<svg style="left:33.2px;top:239.5px" width="16" height="16" viewBox="0 0 16 16"><path d="M2 5c0 7 9 8 10 1h1.500l-3-4-3 4h1.500c-1 3-5 3-5-1z"/></svg>
<svg style="left:49.2px;top:239.5px" width="16" height="16" viewBox="0 0 16 16"><path d="M2 11c0-7 9-8 10-1h1.500l-3 4-3-4h1.500c-1-3-5-3-5 1z"/></svg>
<svg style="left:65.1px;top:239.5px" width="16" height="16" viewBox="0 0 16 16"><path d="M5.500 6h3.500v-3.500l5.500 5.500-5.500 5.500v-3.500h-3.500zM1.500 6v4M3.500 6v4"/></svg>
<svg style="left:81.1px;top:239.5px" width="16" height="16" viewBox="0 0 16 16"><path d="M1.500 6h7.500v-3.500l5.500 5.500-5.500 5.500v-3.500h-7.500l2-2z"/></svg>
<svg style="left:97.1px;top:239.5px" width="16" height="16" viewBox="0 0 16 16"><path d="M1.500 3.500h9l4 4.500-4 4.500h-9z"/></svg>
<svg style="left:113.0px;top:239.5px" width="16" height="16" viewBox="0 0 16 16"><path d="M2.500 3.500h6l4.500 4.500-4.500 4.500h-6l4.500-4.500z"/></svg>
<svg style="left:129.0px;top:239.5px" width="16" height="16" viewBox="0 0 16 16"><path d="M1.500 2.500h8v3.500h1.500v-2l3.500 4-3.500 4v-2h-1.500v3.500h-8z"/></svg>
<svg style="left:144.9px;top:239.5px" width="16" height="16" viewBox="0 0 16 16"><path d="M2.500 1.500h11v8h-3.500v1.500h2l-4 3.500-4-3.500h2v-1.500h-3.500z"/></svg>
<svg style="left:160.9px;top:239.5px" width="16" height="16" viewBox="0 0 16 16"><path d="M14.500 2.500h-8v3.500h-1.500v-2l-3.500 4 3.500 4v-2h1.500v3.500h8z"/></svg>
<svg style="left:176.9px;top:239.5px" width="16" height="16" viewBox="0 0 16 16"><path d="M2.500 14.500h11v-8h-3.500v-1.500h2l-4-3.500-4 3.500h2v1.500h-3.500z"/></svg>
<svg style="left:1.3px;top:255.5px" width="16" height="16" viewBox="0 0 16 16"><path d="M5.500 2.500h5v3.500h1v-1.500l3 3.500-3 3.500v-1.500h-1v3.500h-5v-3.500h-1v1.500l-3-3.500 3-3.500v1.500h1z"/></svg>
<svg style="left:17.3px;top:255.5px" width="16" height="16" viewBox="0 0 16 16"><path d="M8 1l2 2h-1v1.500h2.500v2.500h1.500v-1l2 2-2 2v-1h-1.500v2.500h-2.500v1.500h1l-2 2-2-2h1v-1.500h-2.500v-2.500h-1.500v1l-2-2 2-2v1h1.500v-2.500h2.500v-1.500h-1z"/></svg>
<svg style="left:33.2px;top:255.5px" width="16" height="16" viewBox="0 0 16 16"><path d="M2.500 11a5.500 5.500 0 0 1 10-3h1.500l-2.500 3.500-3-3.500h1.500a3 3 0 0 0-5 3z"/></svg>
<div class="hd" style="top:273px">公式形状</div>
<svg style="left:1.3px;top:291.5px" width="16" height="16" viewBox="0 0 16 16"><path d="M6.500 2.500h3v4h4v3h-4v4h-3v-4h-4v-3h4z"/></svg>
<svg style="left:17.3px;top:291.5px" width="16" height="16" viewBox="0 0 16 16"><rect x="2.500" y="6.500" width="11" height="3"/></svg>
<svg style="left:33.2px;top:291.5px" width="16" height="16" viewBox="0 0 16 16"><path d="M4 2.500l4 3.500 4-3.500 2 2-3.500 3.500 3.500 3.500-2 2-4-3.500-4 3.500-2-2 3.500-3.500-3.500-3.500z"/></svg>
<svg style="left:49.2px;top:291.5px" width="16" height="16" viewBox="0 0 16 16"><rect x="2.500" y="7" width="11" height="2"/><circle cx="8" cy="4" r="1.200"/><circle cx="8" cy="12" r="1.200"/></svg>
<svg style="left:65.1px;top:291.5px" width="16" height="16" viewBox="0 0 16 16"><rect x="2.500" y="4.500" width="11" height="2.500"/><rect x="2.500" y="9" width="11" height="2.500"/></svg>
<svg style="left:81.1px;top:291.5px" width="16" height="16" viewBox="0 0 16 16"><rect x="2.500" y="4.500" width="11" height="2.500"/><rect x="2.500" y="9" width="11" height="2.500"/><path d="M5 14l5-12.500h2l-5 12.500z" fill="#fff"/></svg>
<div class="hd" style="top:308px">流程图</div>
<svg style="left:1.3px;top:326px" width="16" height="16" viewBox="0 0 16 16"><rect x="1.500" y="3.500" width="13" height="9"/></svg>
<svg style="left:17.3px;top:326px" width="16" height="16" viewBox="0 0 16 16"><rect x="1.500" y="3.500" width="13" height="9" rx="3"/></svg>
<svg style="left:33.2px;top:326px" width="16" height="16" viewBox="0 0 16 16"><path d="M8 4l6.500 4-6.500 4-6.500-4z"/></svg>
<svg style="left:49.2px;top:326px" width="16" height="16" viewBox="0 0 16 16"><path d="M5 3.500h9.500l-3.500 9h-9.500z"/></svg>
<svg style="left:65.1px;top:326px" width="16" height="16" viewBox="0 0 16 16"><rect x="1.500" y="3.500" width="13" height="9"/><path d="M3.500 3.500v9M12.500 3.500v9"/></svg>
<svg style="left:81.1px;top:326px" width="16" height="16" viewBox="0 0 16 16"><rect x="2.500" y="3.500" width="11" height="9"/><path d="M4.500 3.500v9M2.500 5.500h11"/></svg>
<svg style="left:97.1px;top:326px" width="16" height="16" viewBox="0 0 16 16"><path d="M1.500 3.500h13v7.500c-3-1.500-4 1-6.500 1.500s-4.500-.5-6.500-1z"/></svg>
<svg style="left:113.0px;top:326px" width="16" height="16" viewBox="0 0 16 16"><path d="M1.500 6.500h10v6c-2-1-3 .5-5 1s-3.500-.5-5-1zM3 6.500v-1.500h10v6M4.500 5v-1.500h10v6" stroke-width=".9"/></svg>
<svg style="left:129.0px;top:326px" width="16" height="16" viewBox="0 0 16 16"><rect x="1.500" y="5.500" width="13" height="5" rx="2.500"/></svg>
<svg style="left:144.9px;top:326px" width="16" height="16" viewBox="0 0 16 16"><path d="M14.5 8.0L11.2 11.9L4.8 11.9L1.5 8.0L4.7 4.1L11.2 4.1z"/></svg>
<svg style="left:160.9px;top:326px" width="16" height="16" viewBox="0 0 16 16"><path d="M1.500 6l13-2.500v9h-13z"/></svg>
<svg style="left:176.9px;top:326px" width="16" height="16" viewBox="0 0 16 16"><path d="M1.500 3.500h13l-3 9h-7z"/></svg>
<svg style="left:1.3px;top:342.5px" width="16" height="16" viewBox="0 0 16 16"><circle cx="8" cy="8" r="4"/></svg>
<svg style="left:17.3px;top:342.5px" width="16" height="16" viewBox="0 0 16 16"><path d="M3.500 3.500h9v5.500l-4.500 3.500-4.500-3.500z"/></svg>
<svg style="left:33.2px;top:342.5px" width="16" height="16" viewBox="0 0 16 16"><path d="M5 3.500h9.500v9h-13v-5.500z"/></svg>
<svg style="left:49.2px;top:342.5px" width="16" height="16" viewBox="0 0 16 16"><path d="M1.500 4.500c2 2 4.500 1.500 6.500 0s4.500-2 6.500 0v7.500c-2-2-4.500-1.500-6.500 0s-4.500 2-6.500 0z"/></svg>
<svg style="left:65.1px;top:342.5px" width="16" height="16" viewBox="0 0 16 16"><circle cx="8" cy="8" r="6"/><path d="M3.800 3.800l8.400 8.400M12.200 3.800l-8.400 8.400"/></svg>
<svg style="left:81.1px;top:342.5px" width="16" height="16" viewBox="0 0 16 16"><circle cx="8" cy="8" r="6"/><path d="M8 2v12M2 8h12"/></svg>
<svg style="left:97.1px;top:342.5px" width="16" height="16" viewBox="0 0 16 16"><path d="M4 2.500h8l-8 11h8z"/></svg>
<svg style="left:113.0px;top:342.5px" width="16" height="16" viewBox="0 0 16 16"><path d="M8 2l4.500 6-4.500 6-4.500-6zM3.500 8h9"/></svg>
<svg style="left:129.0px;top:342.5px" width="16" height="16" viewBox="0 0 16 16"><path d="M8 3l5.500 10h-11z"/></svg>
<svg style="left:144.9px;top:342.5px" width="16" height="16" viewBox="0 0 16 16"><path d="M2.500 3h11l-5.500 10z"/></svg>
<svg style="left:160.9px;top:342.5px" width="16" height="16" viewBox="0 0 16 16"><path d="M4 3.500h10.500c-2 0-2 9 0 9h-10.500c-3 0-3-9 0-9z"/></svg>
<svg style="left:176.9px;top:342.5px" width="16" height="16" viewBox="0 0 16 16"><path d="M2.500 2.500h6a5.500 5.500 0 0 1 0 11h-6z"/></svg>
<svg style="left:1.3px;top:358.5px" width="16" height="16" viewBox="0 0 16 16"><path d="M8 2a6 6 0 1 0 0 12h6v-2h-2.500a6 6 0 0 0-3.500-10z"/></svg>
<svg style="left:17.3px;top:358.5px" width="16" height="16" viewBox="0 0 16 16"><path d="M2 5.500v5c0 2.500 12 2.500 12 0v-5M2 5.500c0 2.500 12 2.500 12 0s-12-2.500-12 0z"/></svg>
<svg style="left:33.2px;top:358.5px" width="16" height="16" viewBox="0 0 16 16"><path d="M5 2.500h6c2.500 0 2.500 11 0 11h-6c-2.500 0-2.500-11 0-11zM11 2.500c-2.500 0-2.500 11 0 11"/></svg>
<svg style="left:49.2px;top:358.5px" width="16" height="16" viewBox="0 0 16 16"><path d="M5.500 2.500h6c3 1.500 3 9.500 0 11h-6l-3.500-5.500z"/></svg>
<div class="hd" style="top:375px">星与旗帜</div>
<svg style="left:1.3px;top:393.5px" width="16" height="16" viewBox="0 0 16 16"><path d="M8 1.500l1.500 3 3.500-2-1 3.500 3 .5-2.500 2 2 3-3.500-.5.5 3.500-3-2.500-2 3-.5-4-4 1.500 2.500-3.500-3-2 3.500-.5-1-3.500 3 2z"/></svg>
<svg style="left:17.3px;top:393.5px" width="16" height="16" viewBox="0 0 16 16"><path d="M9 1.500l.5 3 3-1.500-.5 3 3.500.5-3 2 2.500 3-3.500-.5-.5 3.500-2.500-2.500-2.500 2.500-.5-3.500-3.500 1 2-3-3-2 3.500-.5-.5-3 3 1.500z"/></svg>
<svg style="left:33.2px;top:393.5px" width="16" height="16" viewBox="0 0 16 16"><path d="M8.0 1.5L9.6 6.4L14.5 8.0L9.6 9.6L8.0 14.5L6.4 9.6L1.5 8.0L6.4 6.4z"/></svg>
<svg style="left:49.2px;top:393.5px" width="16" height="16" viewBox="0 0 16 16"><path d="M8.0 2.0L9.6 6.2L14.2 6.5L10.7 9.4L11.8 13.8L8.0 11.3L4.2 13.8L5.3 9.4L1.8 6.5L6.4 6.2z"/></svg>
<svg style="left:65.1px;top:393.5px" width="16" height="16" viewBox="0 0 16 16"><path d="M8.0 1.5L9.9 4.7L13.6 4.8L11.8 8.0L13.6 11.2L9.9 11.3L8.0 14.5L6.1 11.3L2.4 11.2L4.2 8.0L2.4 4.7L6.1 4.7z"/></svg>
<svg style="left:81.1px;top:393.5px" width="16" height="16" viewBox="0 0 16 16"><path d="M8.0 1.5L9.9 4.1L13.1 3.9L12.2 7.0L14.3 9.4L11.4 10.7L10.8 13.9L8.0 12.3L5.2 13.9L4.6 10.7L1.7 9.4L3.8 7.0L2.9 3.9L6.1 4.1z"/></svg>
<svg style="left:97.1px;top:393.5px" width="16" height="16" viewBox="0 0 16 16"><path d="M8.0 1.5L10.0 3.2L12.6 3.4L12.8 6.0L14.5 8.0L12.8 10.0L12.6 12.6L10.0 12.8L8.0 14.5L6.0 12.8L3.4 12.6L3.2 10.0L1.5 8.0L3.2 6.0L3.4 3.4L6.0 3.2z"/><circle cx="8" cy="8" r="3" stroke-width=".7"/><text x="8" y="9.300" font-size="3.6" text-anchor="middle" stroke="none" fill="#444" font-family="Liberation Sans,sans-serif">8</text></svg>
<svg style="left:113.0px;top:393.5px" width="16" height="16" viewBox="0 0 16 16"><path d="M8.0 1.5L9.6 3.0L11.8 2.7L12.3 4.9L14.2 6.0L13.3 8.0L14.2 10.0L12.3 11.1L11.8 13.3L9.6 13.0L8.0 14.5L6.4 13.0L4.2 13.3L3.7 11.1L1.8 10.0L2.7 8.0L1.8 6.0L3.7 4.9L4.2 2.7L6.4 3.0z"/><circle cx="8" cy="8" r="3" stroke-width=".7"/><text x="8" y="9.300" font-size="3.6" text-anchor="middle" stroke="none" fill="#444" font-family="Liberation Sans,sans-serif">10</text></svg>
<svg style="left:129.0px;top:393.5px" width="16" height="16" viewBox="0 0 16 16"><path d="M8.0 1.5L9.4 2.9L11.2 2.4L11.7 4.3L13.6 4.8L13.1 6.6L14.5 8.0L13.1 9.4L13.6 11.2L11.7 11.7L11.2 13.6L9.4 13.1L8.0 14.5L6.6 13.1L4.8 13.6L4.3 11.7L2.4 11.2L2.9 9.4L1.5 8.0L2.9 6.6L2.4 4.7L4.3 4.3L4.7 2.4L6.6 2.9z"/><circle cx="8" cy="8" r="3" stroke-width=".7"/><text x="8" y="9.300" font-size="3.6" text-anchor="middle" stroke="none" fill="#444" font-family="Liberation Sans,sans-serif">12</text></svg>
<svg style="left:144.9px;top:393.5px" width="16" height="16" viewBox="0 0 16 16"><path d="M8.0 1.5L9.1 2.7L10.5 2.0L11.0 3.5L12.6 3.4L12.5 5.0L14.0 5.5L13.3 6.9L14.5 8.0L13.3 9.1L14.0 10.5L12.5 11.0L12.6 12.6L11.0 12.5L10.5 14.0L9.1 13.3L8.0 14.5L6.9 13.3L5.5 14.0L5.0 12.5L3.4 12.6L3.5 11.0L2.0 10.5L2.7 9.1L1.5 8.0L2.7 6.9L2.0 5.5L3.5 5.0L3.4 3.4L5.0 3.5L5.5 2.0L6.9 2.7z"/><circle cx="8" cy="8" r="3" stroke-width=".7"/><text x="8" y="9.300" font-size="3.6" text-anchor="middle" stroke="none" fill="#444" font-family="Liberation Sans,sans-serif">16</text></svg>
<svg style="left:160.9px;top:393.5px" width="16" height="16" viewBox="0 0 16 16"><path d="M8.0 1.5L8.7 2.5L9.7 1.7L10.1 2.9L11.2 2.4L11.3 3.6L12.6 3.4L12.4 4.7L13.6 4.8L13.1 5.9L14.3 6.3L13.5 7.3L14.5 8.0L13.5 8.7L14.3 9.7L13.1 10.1L13.6 11.2L12.4 11.3L12.6 12.6L11.3 12.4L11.2 13.6L10.1 13.1L9.7 14.3L8.7 13.5L8.0 14.5L7.3 13.5L6.3 14.3L5.9 13.1L4.8 13.6L4.7 12.4L3.4 12.6L3.6 11.3L2.4 11.2L2.9 10.1L1.7 9.7L2.5 8.7L1.5 8.0L2.5 7.3L1.7 6.3L2.9 5.9L2.4 4.7L3.6 4.7L3.4 3.4L4.7 3.6L4.7 2.4L5.9 2.9L6.3 1.7L7.3 2.5z"/><circle cx="8" cy="8" r="3" stroke-width=".7"/><text x="8" y="9.300" font-size="3.6" text-anchor="middle" stroke="none" fill="#444" font-family="Liberation Sans,sans-serif">24</text></svg>
<svg style="left:176.9px;top:393.5px" width="16" height="16" viewBox="0 0 16 16"><path d="M8.0 1.5L8.5 2.4L9.3 1.6L9.6 2.6L10.5 2.0L10.6 3.1L11.6 2.6L11.6 3.7L12.6 3.4L12.3 4.4L13.4 4.4L12.9 5.4L14.0 5.5L13.4 6.4L14.4 6.7L13.6 7.5L14.5 8.0L13.6 8.5L14.4 9.3L13.4 9.6L14.0 10.5L12.9 10.6L13.4 11.6L12.3 11.6L12.6 12.6L11.6 12.3L11.6 13.4L10.6 12.9L10.5 14.0L9.6 13.4L9.3 14.4L8.5 13.6L8.0 14.5L7.5 13.6L6.7 14.4L6.4 13.4L5.5 14.0L5.4 12.9L4.4 13.4L4.4 12.3L3.4 12.6L3.7 11.6L2.6 11.6L3.1 10.6L2.0 10.5L2.6 9.6L1.6 9.3L2.4 8.5L1.5 8.0L2.4 7.5L1.6 6.7L2.6 6.4L2.0 5.5L3.1 5.4L2.6 4.4L3.7 4.4L3.4 3.4L4.4 3.7L4.4 2.6L5.4 3.1L5.5 2.0L6.4 2.6L6.7 1.6L7.5 2.4z"/><circle cx="8" cy="8" r="3" stroke-width=".7"/><text x="8" y="9.300" font-size="3.6" text-anchor="middle" stroke="none" fill="#444" font-family="Liberation Sans,sans-serif">32</text></svg>
<svg style="left:1.3px;top:409px" width="16" height="16" viewBox="0 0 16 16"><path d="M1.500 5.500h3.500v-2h6v2h3.500l-1.500 3 1.500 3h-5v-2h-3v2h-5l1.500-3z"/></svg>
<svg style="left:17.3px;top:409px" width="16" height="16" viewBox="0 0 16 16"><path d="M1.500 10.500h3.500v2h6v-2h3.500l-1.500-3 1.500-3h-5v2h-3v-2h-5l1.500 3z"/></svg>
<svg style="left:33.2px;top:409px" width="16" height="16" viewBox="0 0 16 16"><path d="M1.500 6c1.500-.5 2.500-.5 3.500-.5v-2c2-.5 4-.5 6 0v2c1 0 2 0 3.500.5l-1.500 3 1.500 3.500c-2-.5-3-.5-5-.5v-2h-3v2c-2 0-3 0-5 .5l1.500-3.500z"/></svg>
<svg style="left:49.2px;top:409px" width="16" height="16" viewBox="0 0 16 16"><path d="M1.500 10c1.500.5 2.500.5 3.500.5v2c2 .5 4 .5 6 0v-2c1 0 2 0 3.500-.5l-1.500-3 1.500-3.500c-2 .5-3 .5-5 .5v2h-3v-2c-2 0-3 0-5-.5l1.500 3.500z"/></svg>
<svg style="left:65.1px;top:409px" width="16" height="16" viewBox="0 0 16 16"><path d="M4.500 4v-1a1 1 0 0 1 1-1h7a1 1 0 0 1 0 2.500h-1v8a1.500 1.500 0 0 1-1.500 1.500h-7a1 1 0 0 1 0-2.500h1.500zM4.500 4.500h7"/></svg>
<svg style="left:81.1px;top:409px" width="16" height="16" viewBox="0 0 16 16"><path d="M3 5.500h9.500v-1.500a1 1 0 0 1 2 0v7.500h-10v1.500a1 1 0 0 1-2.500 0v-6.500a1 1 0 0 1 1-1zM4.500 5.500v6"/></svg>
<svg style="left:97.1px;top:409px" width="16" height="16" viewBox="0 0 16 16"><path d="M2 4.500c2-2 4-1.500 6 0s4 1.500 6 0v7c-2 1.500-4 1.500-6 0s-4-2-6 0z"/></svg>
<svg style="left:113.0px;top:409px" width="16" height="16" viewBox="0 0 16 16"><path d="M2 4c1.500-1 2.500-1 4 0s2.500 1 4 0 2.500-1 4 0v8c-1.500-1-2.500-1-4 0s-2.500 1-4 0-2.500-1-4 0z"/></svg>
<div class="hd" style="top:426.5px">标注</div>
<svg style="left:1.3px;top:444px" width="16" height="16" viewBox="0 0 16 16"><path d="M2.500 2.500h11v8h-6l-2.500 3.500v-3.500h-2.500z"/></svg>
<svg style="left:17.3px;top:444px" width="16" height="16" viewBox="0 0 16 16"><path d="M4.500 2.500h7a2 2 0 0 1 2 2v4a2 2 0 0 1-2 2h-3.500l-2.500 3.500v-3.500h-1a2 2 0 0 1-2-2v-4a2 2 0 0 1 2-2z"/></svg>
<svg style="left:33.2px;top:444px" width="16" height="16" viewBox="0 0 16 16"><path d="M8 2.500c3.500 0 6 1.800 6 4.200s-2.500 4.300-6 4.300c-.5 0-1 0-1.500-.1l-3 2.600 1-3.300c-1.500-.8-2.500-2-2.500-3.500 0-2.400 2.500-4.200 6-4.200z"/></svg>
<svg style="left:49.2px;top:444px" width="16" height="16" viewBox="0 0 16 16"><path d="M5 10.500a2.200 2.200 0 0 1-1.500-4a2.200 2.200 0 0 1 3-2.500a2.800 2.800 0 0 1 4.500.5a2.200 2.200 0 0 1 2 3.500a2.200 2.200 0 0 1-2.500 2.800a2.800 2.800 0 0 1-3.500.4a2.500 2.500 0 0 1-2-.7z"/><circle cx="3.500" cy="12.500" r=".9"/><circle cx="2.200" cy="14" r=".5"/></svg>
<svg style="left:65.1px;top:444px" width="16" height="16" viewBox="0 0 16 16"><rect x="6.500" y="3.500" width="8" height="6"/><path d="M6.500 5l-5 7.500"/></svg>
<svg style="left:81.1px;top:444px" width="16" height="16" viewBox="0 0 16 16"><rect x="6.500" y="3.500" width="8" height="6"/><path d="M6.500 5h-2l-3 7.500"/></svg>
<svg style="left:97.1px;top:444px" width="16" height="16" viewBox="0 0 16 16"><rect x="6.500" y="3.500" width="8" height="6"/><path d="M6.500 5h-2.500v6c0 1.500 1 2 3.500 2.500"/></svg>
<svg style="left:113.0px;top:444px" width="16" height="16" viewBox="0 0 16 16"><rect x="6.500" y="3.500" width="8" height="6" stroke="#bbb" stroke-dasharray="1 .8"/><path d="M6.500 5l-5 7.500"/><path d="M5.500 3.500v6"/></svg>
<svg style="left:129.0px;top:444px" width="16" height="16" viewBox="0 0 16 16"><rect x="6.500" y="3.500" width="8" height="6" stroke="#bbb" stroke-dasharray="1 .8"/><path d="M6.500 5h-2l-3 7.500"/><path d="M5.500 3.500v6"/></svg>
<svg style="left:144.9px;top:444px" width="16" height="16" viewBox="0 0 16 16"><rect x="6.500" y="3.500" width="8" height="6" stroke="#bbb" stroke-dasharray="1 .8"/><path d="M6.500 5h-2.500v6c0 1.500 1 2 3.500 2.500"/><path d="M5.500 3.500v6"/></svg>
<svg style="left:160.9px;top:444px" width="16" height="16" viewBox="0 0 16 16"><rect x="6.500" y="3.500" width="8" height="6" stroke="#bbb" stroke-dasharray="1 .8"/><path d="M6.500 5l-5 7.500"/></svg>
<svg style="left:176.9px;top:444px" width="16" height="16" viewBox="0 0 16 16"><rect x="6.500" y="3.500" width="8" height="6" stroke="#bbb" stroke-dasharray="1 .8"/><path d="M6.500 5h-2l-3 7.500"/></svg>
<svg style="left:1.3px;top:460.5px" width="16" height="16" viewBox="0 0 16 16"><rect x="6.500" y="3.500" width="8" height="6" stroke="#bbb" stroke-dasharray="1 .8"/><path d="M6.500 5h-2.500v6c0 1.500 1 2 3.500 2.500"/></svg>
<svg style="left:17.3px;top:460.5px" width="16" height="16" viewBox="0 0 16 16"><rect x="6.500" y="3.500" width="8" height="6"/><path d="M6.500 5l-5 7.500"/><path d="M5.500 3.500v6"/></svg>
<svg style="left:33.2px;top:460.5px" width="16" height="16" viewBox="0 0 16 16"><rect x="6.500" y="3.500" width="8" height="6"/><path d="M6.500 5h-2l-3 7.500"/><path d="M5.500 3.500v6"/></svg>
<svg style="left:49.2px;top:460.5px" width="16" height="16" viewBox="0 0 16 16"><rect x="6.500" y="3.500" width="8" height="6"/><path d="M6.500 5h-2.500v6c0 1.500 1 2 3.500 2.500"/><path d="M5.500 3.500v6"/></svg>
<div class="hd" style="top:478px">动作按钮</div>
<svg style="left:1.3px;top:496px" width="16" height="16" viewBox="0 0 16 16"><rect x="1.500" y="1.500" width="13" height="13"/><path d="M11 4.500v7l-6-3.500z"/></svg>
<svg style="left:17.3px;top:496px" width="16" height="16" viewBox="0 0 16 16"><rect x="1.500" y="1.500" width="13" height="13"/><path d="M5 4.500v7l6-3.500z"/></svg>
<svg style="left:33.2px;top:496px" width="16" height="16" viewBox="0 0 16 16"><rect x="1.500" y="1.500" width="13" height="13"/><path d="M11.500 4.500v7l-5-3.500zM5 4.500v7"/></svg>
<svg style="left:49.2px;top:496px" width="16" height="16" viewBox="0 0 16 16"><rect x="1.500" y="1.500" width="13" height="13"/><path d="M4.500 4.500v7l5-3.500zM11 4.500v7"/></svg>
<svg style="left:65.1px;top:496px" width="16" height="16" viewBox="0 0 16 16"><rect x="1.500" y="1.500" width="13" height="13"/><path d="M3.500 8.500l4.500-4.500 4.500 4.500h-1.500v3.500h-6v-3.500zM7 12v-2.500h2v2.500" stroke-width=".9"/></svg>
<svg style="left:81.1px;top:496px" width="16" height="16" viewBox="0 0 16 16"><rect x="1.500" y="1.500" width="13" height="13"/><circle cx="8" cy="8" r="4" stroke-width=".9"/><path d="M8 7v3.500M8 5.200v.8" stroke-width="1.200"/></svg>
<svg style="left:97.1px;top:496px" width="16" height="16" viewBox="0 0 16 16"><rect x="1.500" y="1.500" width="13" height="13"/><path d="M11.500 4.500v4a2.500 2.500 0 0 1-5 0v-1h-1.500l2.500-2.500 2.500 2.500h-1.500v1" stroke-width=".9"/></svg>
<svg style="left:113.0px;top:496px" width="16" height="16" viewBox="0 0 16 16"><rect x="1.500" y="1.500" width="13" height="13"/><path d="M3.500 6h7v1l2-.5v4l-2-.5v1h-7z" stroke-width=".9"/></svg>
<svg style="left:129.0px;top:496px" width="16" height="16" viewBox="0 0 16 16"><rect x="1.500" y="1.500" width="13" height="13"/><path d="M5 3.500h4l2.500 2.500v6.500h-6.500zM9 3.500v2.500h2.500" stroke-width=".9"/></svg>
<svg style="left:144.9px;top:496px" width="16" height="16" viewBox="0 0 16 16"><rect x="1.500" y="1.500" width="13" height="13"/><path d="M3.500 6.500h2l2.500-2v7l-2.500-2h-2zM10 5.500l2-1M10 8h2.500M10 10.500l2 1" stroke-width=".9"/></svg>
<svg style="left:160.9px;top:496px" width="16" height="16" viewBox="0 0 16 16"><rect x="1.500" y="1.500" width="13" height="13"/><text x="8" y="12" font-size="10" font-weight="bold" text-anchor="middle" stroke="none" fill="#444" font-family="Liberation Sans,sans-serif">?</text></svg>
<svg style="left:176.9px;top:496px" width="16" height="16" viewBox="0 0 16 16"><rect x="1.500" y="1.500" width="13" height="13"/></svg>
<svg style="left:201px;top:512px" width="6" height="6" viewBox="0 0 6 6" style="fill:#b0b0b0;stroke:none"><rect x="4" y="0" width="1.200" height="1.200"/><rect x="2" y="2" width="1.200" height="1.200"/><rect x="4" y="2" width="1.200" height="1.200"/><rect x="0" y="4" width="1.200" height="1.200"/><rect x="2" y="4" width="1.200" height="1.200"/><rect x="4" y="4" width="1.200" height="1.200"/></svg>
</div>
<svg class="abs" style="left:407px;top:165px;z-index:50" width="12" height="19" viewBox="0 0 12 19"><path d="M1 1v14l3.200-3 2.300 5.500 2.200-1-2.400-5.300h4.500z" fill="#fff" stroke="#222" stroke-width="1"/></svg>
<div id="status" class="abs"><div class="abs" style="left:0;top:.5px;width:1280px;height:20px">
<span style="left:6px;font-size:10px">幻灯片 第 9 张，共 27 张</span>
<svg style="left:129px;top:3px" width="14" height="13" viewBox="0 0 14 13" fill="none" stroke="#e8e8e8" stroke-width="1"><path d="M1.500 1.500h4.500l1 1v9l-1-1h-4.500zM7 2.500l1-1h2M7 11.500l1-1h2M9.500 4.500l3 3M12.500 4.500l-3 3"/></svg>
<span style="left:157px">中文(中国)</span>
<svg style="left:953px;top:4px" width="11" height="11" viewBox="0 0 11 11" fill="none" stroke="#e8e8e8" stroke-width="1.200"><path d="M1 6.500h9M1 9.500h9M3.500 4l2-2.500 2 2.500z" fill="#e8e8e8"/></svg>
<span style="left:967px">备注</span>
<div class="abs" style="left:1003px;top:1px;width:30px;height:18px;background:#2e2e2e"></div>
<svg style="left:1011px;top:3px" width="13" height="13" viewBox="0 0 13 13" fill="none" stroke="#f0f0f0" stroke-width="1.300"><rect x="1" y="1.500" width="11" height="10"/><rect x="3.500" y="4" width="3.500" height="3" fill="#f0f0f0" stroke="none"/><path d="M3.500 9.500h6" stroke-width="1"/></svg>
<svg style="left:1042px;top:4px" width="12" height="11" viewBox="0 0 12 11" fill="#f0f0f0"><rect x="0" y="0" width="5" height="4.500"/><rect x="6.500" y="0" width="5" height="4.500"/><rect x="0" y="6" width="5" height="4.500"/><rect x="6.500" y="6" width="5" height="4.500"/></svg>
<svg style="left:1071px;top:3px" width="13" height="13" viewBox="0 0 13 13" fill="none" stroke="#d8d8d8" stroke-width="1"><path d="M1.500 2h4l1 1 1-1h4v9h-4l-1 1-1-1h-4zM6.500 3v9M3 4.500h2M3 6.500h2M3 8.500h2"/></svg>
<svg style="left:1101px;top:3px" width="13" height="14" viewBox="0 0 13 14" fill="none" stroke="#f0f0f0" stroke-width="1.200"><path d="M.5 1.500h12M1.500 1.500v6h10v-6M6.500 7.500v4M4 12.500h5"/><rect x="3.500" y="3" width="6" height="2.500" fill="#f0f0f0" stroke="none"/></svg>
<div class="abs" style="left:1128px;top:9px;width:5px;height:1.500px;background:#f0f0f0"></div>
<div class="abs" style="left:1136px;top:9.500px;width:80px;height:1px;background:#d8d8d8"></div>
<div class="abs" style="left:1176px;top:7px;width:1px;height:6px;background:#d8d8d8"></div>
<div class="abs" style="left:1159.500px;top:4.500px;width:3.500px;height:11px;background:#f4f4f4"></div>
<div class="abs" style="left:1219px;top:9px;width:5.500px;height:1.500px;background:#f0f0f0"></div><div class="abs" style="left:1221px;top:7px;width:1.500px;height:5.500px;background:#f0f0f0"></div>
<span style="left:1233px;font-size:10.500px;letter-spacing:-.2px">66%</span>
<svg style="left:1264px;top:4px" width="12" height="12" viewBox="0 0 12 12" fill="none" stroke="#f0f0f0" stroke-width="1.100"><rect x=".6" y=".6" width="10.800" height="10.800"/><path d="M3 5v-2h2M7 3h2v2M9 7v2h-2M5 9h-2v-2"/><rect x="5" y="5" width="2" height="2" fill="#f0f0f0" stroke="none"/></svg>
</div></div>
<div id="taskbar" class="abs"><div class="abs" style="left:0;top:-2px;width:1280px;height:26px">
<div class="abs" style="left:0;top:0;width:1280px;height:26px;background:linear-gradient(90deg,#0a1a38 0,#0b1d3c 30%,#0a2442 65%,#0a1e3c 100%)"></div><div class="abs" style="left:484px;top:0;width:128px;height:26px;background:#163a70"></div><div class="abs" style="left:358px;top:24px;width:121px;height:2px;background:#86b4ea"></div><div class="abs" style="left:484px;top:24px;width:128px;height:2px;background:#9cc8f6"></div><div class="abs" style="left:616px;top:24px;width:122px;height:2px;background:#86b4ea"></div><svg style="left:6px;top:6px" width="16" height="16" viewBox="0 0 16 16"><path d="M1 3l6-1v5.500h-6zM8 1.900l7-1v6.600h-7zM1 8.500h6v5.500l-6-1zM8 8.500h7v6.600l-7-1z" fill="#fff"/></svg><svg style="left:35px;top:6px" width="16" height="16" viewBox="0 0 16 16"><circle cx="9.500" cy="6.500" r="4.500" fill="none" stroke="#fff" stroke-width="1.500"/><path d="M6.500 10l-5 5" stroke="#fff" stroke-width="1.800"/></svg><svg style="left:63px;top:6px" width="18" height="16" viewBox="0 0 18 16"><rect x="4.500" y="2.500" width="9" height="11" fill="none" stroke="#fff" stroke-width="1.300"/><path d="M2.500 4.500h-1.500v7h1.500M15.500 4.500h1.500v7h-1.500" fill="none" stroke="#fff" stroke-width="1.200"/></svg><svg style="left:95px;top:6px" width="16" height="16" viewBox="0 0 16 16"><circle cx="8" cy="8" r="6.500" fill="#2b7ee0"/><path d="M4 9a4 4 0 0 1 8-1.500c0 2-2 2.500-3.500 2.500h-2.500c1 2 3.500 2.500 5.500 1.500" fill="none" stroke="#fff" stroke-width="2.200"/></svg><svg style="left:124px;top:5.5px" width="18" height="17" viewBox="0 0 18 17"><rect x="1.500" y="1.500" width="15" height="14" fill="#0a2a30" stroke="#2aa198" stroke-width="1.200"/><text x="9" y="12" font-size="8.500" text-anchor="middle" fill="#35c0b0" font-family="Liberation Sans,sans-serif">Au</text></svg><svg style="left:153px;top:5.5px" width="18" height="17" viewBox="0 0 18 17"><rect x="1.500" y="1.500" width="15" height="14" fill="#1c0a3a" stroke="#9a7ae8" stroke-width="1.200"/><text x="9" y="12" font-size="8.500" text-anchor="middle" fill="#c0a4ff" font-family="Liberation Sans,sans-serif">Ae</text></svg><svg style="left:183px;top:6px" width="16" height="16" viewBox="0 0 16 16"><path d="M8 2l6 4-3 7-7-2z" fill="#3a2454" stroke="#c89ae8" stroke-width="1.600"/></svg><svg style="left:213px;top:6px" width="16" height="16" viewBox="0 0 16 16"><circle cx="9.500" cy="6.500" r="4" fill="#fff" stroke="#f07c18" stroke-width="2.400"/><path d="M6 10l-4 4" stroke="#f07c18" stroke-width="2.600"/></svg><svg style="left:241px;top:6px" width="16" height="16" viewBox="0 0 16 16"><rect x="1.500" y="1.500" width="13" height="13" rx="1.500" fill="#1c78e0"/><path d="M5 4.500v4a3 3 0 0 0 6 0v-4" fill="none" stroke="#fff" stroke-width="2"/></svg><svg style="left:272px;top:6px" width="16" height="16" viewBox="0 0 16 16"><circle cx="8" cy="8" r="6.500" fill="#e8a030"/><path d="M8 1.500a6.500 6.500 0 0 1 5.600 3.200h-5.600z" fill="#d84a38"/><path d="M2.400 4.700a6.500 6.500 0 0 0 3 9.300l2.600-4.500z" fill="#4aa84a"/><circle cx="8" cy="8" r="2.800" fill="#4a8af0" stroke="#fff" stroke-width="1"/></svg><svg style="left:302px;top:6px" width="16" height="16" viewBox="0 0 16 16"><circle cx="8" cy="8" r="6.500" fill="#d8541e"/><path d="M6 12v-8h3a2.500 2.500 0 0 1 0 5h-3" fill="none" stroke="#fff" stroke-width="1.800"/></svg><svg style="left:332px;top:6px" width="16" height="16" viewBox="0 0 16 16"><circle cx="8" cy="8" r="6" fill="#f0c890"/><circle cx="6" cy="7" r="1" fill="#7a3a2a"/><circle cx="10" cy="7" r="1" fill="#7a3a2a"/><ellipse cx="8" cy="11" rx="1.500" ry="1.800" fill="#c8503a"/></svg><svg style="left:361px;top:6px" width="13" height="16" viewBox="0 0 13 16"><path d="M2 1.500h7l2 2v11h-9z" fill="#f4d878"/><path d="M2 1.500h3v13h-3z" fill="#f8e8a8"/></svg><span style="left:377px;font-size:10.800px;letter-spacing:-.15px">C:\Users\Administr...</span><svg style="left:489px;top:6px" width="15" height="16" viewBox="0 0 15 16"><rect x="1" y="2" width="13" height="12" rx="1" fill="#d8502a"/><rect x="7" y="3.500" width="6" height="9" fill="#f8d8c8"/><text x="5" y="11.500" font-size="8.500" font-weight="bold" text-anchor="middle" fill="#fff" font-family="Liberation Sans,sans-serif">P</text></svg><span style="left:506px;letter-spacing:-.3px">iSlide 使用手册 - 副...</span><svg style="left:617.5px;top:6px" width="15" height="16" viewBox="0 0 15 16"><rect x="1" y="2" width="13" height="12" rx="1" fill="#d8502a"/><rect x="7" y="3.500" width="6" height="9" fill="#f8d8c8"/><text x="5" y="11.500" font-size="8.500" font-weight="bold" text-anchor="middle" fill="#fff" font-family="Liberation Sans,sans-serif">P</text></svg><span style="left:634.500px;letter-spacing:-.15px">课程.pptx - PowerP...</span><svg style="left:1044px;top:6px" width="16" height="16" viewBox="0 0 16 16"><path d="M3 10l5-5 5 5" fill="none" stroke="#fff" stroke-width="1.400"/></svg><svg style="left:1063px;top:6px" width="16" height="16" viewBox="0 0 16 16"><rect x="3" y="5.500" width="11" height="6" fill="none" stroke="#fff" stroke-width="1.200"/><rect x="4.500" y="7" width="8" height="3" fill="#fff"/><path d="M1.500 4v4M0 5h3" stroke="#fff"/></svg><svg style="left:1083px;top:6px" width="16" height="16" viewBox="0 0 16 16"><path d="M1.500 6.500h2.500l3-3v9l-3-3h-2.500z" fill="none" stroke="#fff" stroke-width="1.100"/><path d="M9 5.500a3.500 3.500 0 0 1 0 5M11 4a6 6 0 0 1 0 8M13 2.500a8 8 0 0 1 0 11" fill="none" stroke="#fff" stroke-width="1"/></svg><svg style="left:1103px;top:6px" width="16" height="16" viewBox="0 0 16 16"><path d="M2 14a12 12 0 0 1 12-12M5 14a9 9 0 0 1 9-9M8 14a6 6 0 0 1 6-6" fill="none" stroke="#c8d4e4" stroke-width="1.300"/><circle cx="12.500" cy="13" r="1.500" fill="#fff"/></svg><svg style="left:1124px;top:6px" width="16" height="16" viewBox="0 0 16 16"><path d="M6 13c-3 1-4-2-1-3s6-2 6-5-4-3-4 0v7" fill="none" stroke="#d8e4f4" stroke-width="1.400"/></svg><svg style="left:1148px;top:6.5px" width="19" height="15" viewBox="0 0 19 15"><rect x="1" y="2.500" width="17" height="10" rx="1" fill="none" stroke="#fff" stroke-width="1.100"/><path d="M3.500 5.500h12M3.500 7.500h12M5 10h9" stroke="#fff" stroke-width="1"/></svg><span style="left:1174.500px;top:5.500px;font-size:11.500px">英</span><div class="abs" style="left:1197px;top:8px;width:12px;height:12px;background:#fff"></div><span style="left:1198.500px;top:7px;font-size:10px;color:#111;font-weight:bold">M</span><span style="left:1224px;top:6.500px;font-size:9px;color:#e0e8f0;letter-spacing:-.3px">49</span><svg style="left:1219px;top:5px" width="16" height="16" viewBox="0 0 16 16"><path d="M12 2.500a7 7 0 0 1-3 12" fill="none" stroke="#b0bccc" stroke-width="1"/></svg><span style="left:1245.500px;font-size:10.500px;letter-spacing:-.1px">20:14</span><div class="abs" style="left:1276px;top:0;width:1px;height:26px;background:#4a5a74"></div>
</div></div>
</body>
</html>
